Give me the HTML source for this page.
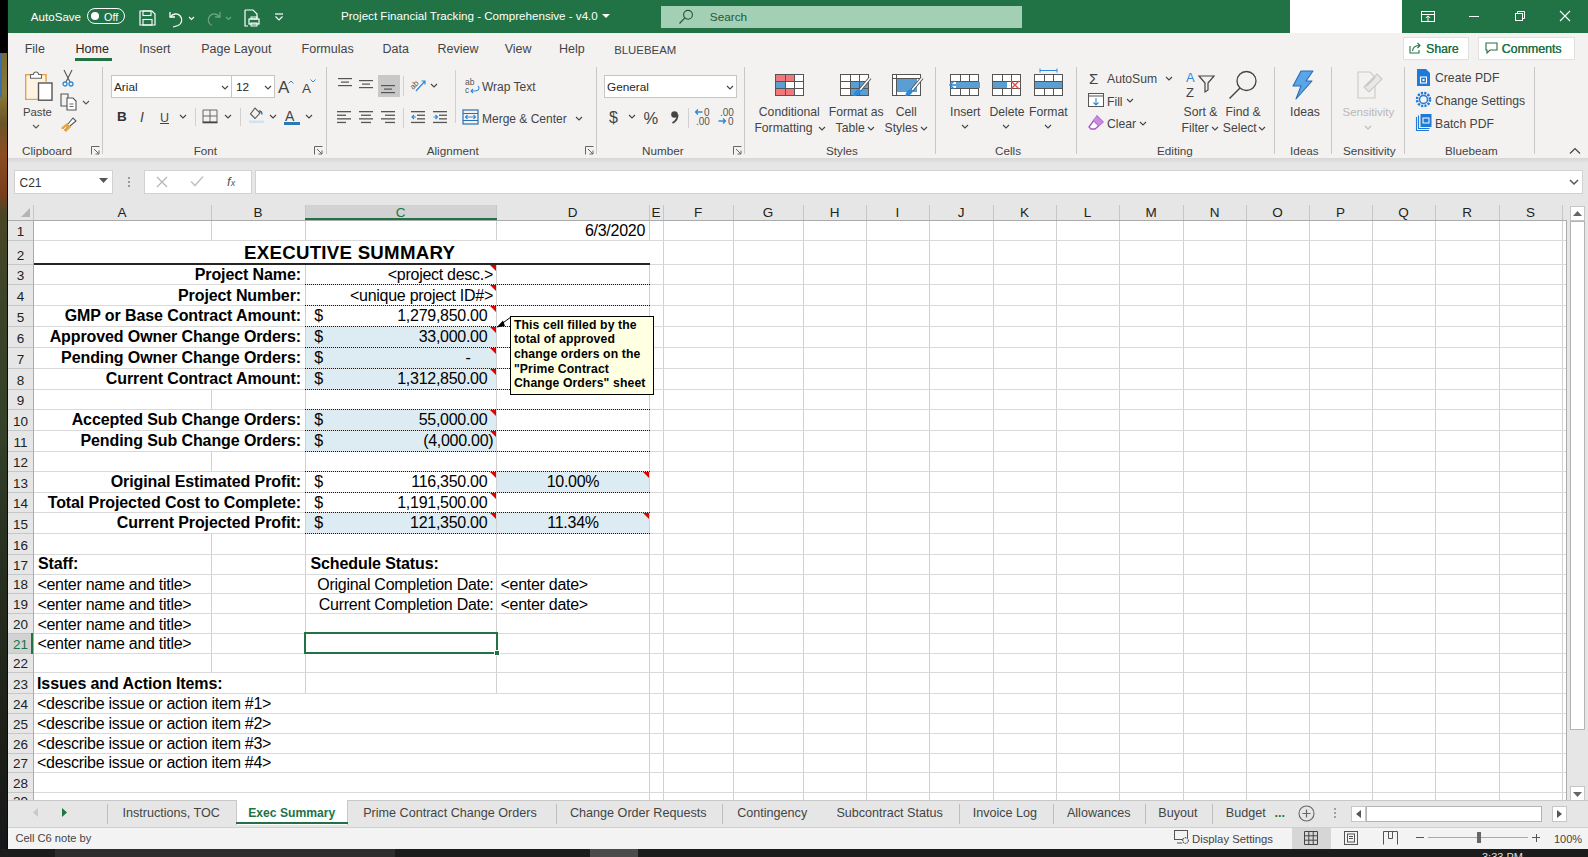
<!DOCTYPE html><html><head><meta charset="utf-8"><title>Excel</title><style>
*{margin:0;padding:0;box-sizing:border-box}
html,body{width:1588px;height:857px;overflow:hidden;background:#f3f3f3;font-family:"Liberation Sans",sans-serif}
.a{position:absolute}
.t{position:absolute;white-space:nowrap;line-height:20px}
svg{position:absolute;overflow:visible}
</style></head><body>
<div class="a" style="left:0;top:0;width:8px;height:857px;background:#000"></div>
<div class="a" style="left:0;top:53px;width:7px;height:796px;background:linear-gradient(180deg,#7a6a34 0px,#8a7a38 40px,#6a5428 70px,#8a4e22 100px,#7a3e1c 140px,#4a4626 160px,#3c4428 250px,#34402a 380px,#2a3222 480px,#22281c 600px,#1c1e18 700px,#16171a 796px)"></div>
<div class="a" style="left:0;top:53px;width:2px;height:44px;background:#3d6fa8"></div>
<div class="a" style="left:7px;top:0;width:1px;height:849px;background:#0a0a0a"></div>
<div class="a" style="left:8px;top:0;width:1580px;height:33px;background:#217346"></div>
<div class="a" style="left:1290px;top:0;width:112px;height:34px;background:#fff"></div>
<div class="a" style="left:8px;top:33px;width:1580px;height:125px;background:#f3f2f1"></div>
<div class="t" style="left:30.8px;top:6.83px;font-size:11.6px;font-weight:normal;color:#ffffff;">AutoSave</div>
<div class="a" style="left:87px;top:8px;width:38px;height:16px;border:1.3px solid #fff;border-radius:8px"></div>
<div class="a" style="left:91px;top:12px;width:8px;height:8px;border-radius:50%;background:#fff"></div>
<div class="t" style="left:104px;top:6.91px;font-size:10.8px;font-weight:normal;color:#ffffff;">Off</div>
<svg style="left:139px;top:10px" width="17" height="16" viewBox="0 0 17 16"><path d="M1 1h12l3 3v11H1z" fill="none" stroke="#fff" stroke-width="1.2"/><rect x="4" y="1" width="8" height="4.5" fill="none" stroke="#fff" stroke-width="1.1"/><rect x="4" y="9.5" width="9" height="5.5" fill="none" stroke="#fff" stroke-width="1.1"/></svg>
<svg style="left:167px;top:9px" width="30" height="18" viewBox="0 0 30 18"><path d="M3 3v5h5" fill="none" stroke="#fff" stroke-width="1.3"/><path d="M3.5 8A6 6 0 1 1 11 16.5L6 18" fill="none" stroke="#fff" stroke-width="1.3"/><path d="M22 8l2.5 2.5L27 8" fill="none" stroke="#fff" stroke-width="1.1"/></svg>
<svg style="left:204px;top:9px" width="30" height="18" viewBox="0 0 30 18" opacity="0.35"><path d="M16 3v5h-5" fill="none" stroke="#fff" stroke-width="1.3"/><path d="M15.5 8A6 6 0 1 0 8 16.5" fill="none" stroke="#fff" stroke-width="1.3"/><path d="M22 8l2.5 2.5L27 8" fill="none" stroke="#fff" stroke-width="1.1"/></svg>
<svg style="left:244px;top:9px" width="16" height="18" viewBox="0 0 16 18"><path d="M1 1h8l4 4v4M1 1v16h3" fill="none" stroke="#fff" stroke-width="1.2"/><rect x="5" y="10" width="10" height="5" fill="none" stroke="#fff" stroke-width="1.2"/><rect x="7" y="8" width="6" height="2" fill="none" stroke="#fff" stroke-width="1"/><rect x="7" y="14" width="6" height="3" fill="none" stroke="#fff" stroke-width="1"/></svg>
<svg style="left:274px;top:13px" width="10" height="8" viewBox="0 0 10 8"><path d="M1 1h8" stroke="#fff" stroke-width="1.2"/><path d="M1.5 3.5L5 7l3.5-3.5" fill="none" stroke="#fff" stroke-width="1.2"/></svg>
<div class="t" style="left:341px;top:6.32px;font-size:11.62px;font-weight:normal;color:#ffffff;">Project Financial Tracking - Comprehensive - v4.0</div>
<svg style="left:602px;top:14px" width="8" height="5"><polygon points="0,0 8,0 4,4" fill="#fff"/></svg>
<div class="a" style="left:661px;top:6px;width:361px;height:22px;background:#a3cfb4"></div>
<svg style="left:678px;top:9px" width="16" height="16" viewBox="0 0 16 16"><circle cx="10" cy="5.8" r="4.4" fill="none" stroke="#1f5a3a" stroke-width="1.1"/><path d="M6.8 8.9L1.5 14.5" stroke="#1f5a3a" stroke-width="1.2"/></svg>
<div class="t" style="left:709.8px;top:6.86px;font-size:11.8px;font-weight:normal;color:#1f5a3a;">Search</div>
<svg style="left:1420px;top:9px" width="17" height="14" viewBox="0 0 17 14"><rect x="1.5" y="2.5" width="13" height="10" fill="none" stroke="#fff" stroke-width="1"/><path d="M1.5 5.5h13" stroke="#fff"/><path d="M8 12V7M5.8 9L8 6.8 10.2 9" fill="none" stroke="#fff"/></svg>
<div class="a" style="left:1469px;top:16px;width:10px;height:1px;background:#fff"></div>
<svg style="left:1514px;top:10px" width="12" height="12" viewBox="0 0 12 12"><rect x="1.5" y="3.5" width="7" height="7" fill="none" stroke="#fff"/><path d="M3.5 3.5v-2h7v7h-2" fill="none" stroke="#fff"/></svg>
<svg style="left:1559px;top:10px" width="12" height="12" viewBox="0 0 12 12"><path d="M1 1l10 10M11 1L1 11" stroke="#fff" stroke-width="1.1"/></svg>
<div class="a" style="left:8px;top:158px;width:1580px;height:5px;background:linear-gradient(180deg,#d6d6d6,#e6e6e6)"></div>
<div class="t" style="left:24.7px;top:39.32px;font-size:12.5px;font-weight:normal;color:#444;">File</div>
<div class="t" style="left:75.6px;top:39.32px;font-size:12.5px;font-weight:normal;color:#262626;">Home</div>
<div class="t" style="left:139.3px;top:39.32px;font-size:12.5px;font-weight:normal;color:#444;">Insert</div>
<div class="t" style="left:201.2px;top:39.32px;font-size:12.5px;font-weight:normal;color:#444;">Page Layout</div>
<div class="t" style="left:301.6px;top:39.32px;font-size:12.5px;font-weight:normal;color:#444;">Formulas</div>
<div class="t" style="left:382.5px;top:39.32px;font-size:12.5px;font-weight:normal;color:#444;">Data</div>
<div class="t" style="left:437.6px;top:39.32px;font-size:12.5px;font-weight:normal;color:#444;">Review</div>
<div class="t" style="left:504.7px;top:39.32px;font-size:12.5px;font-weight:normal;color:#444;">View</div>
<div class="t" style="left:559px;top:39.32px;font-size:12.5px;font-weight:normal;color:#444;">Help</div>
<div class="t" style="left:614.2px;top:39.70px;font-size:11.4px;font-weight:normal;color:#444;">BLUEBEAM</div>
<div class="a" style="left:75px;top:58px;width:37px;height:3px;background:#217346"></div>
<div class="a" style="left:1403px;top:37px;width:66px;height:23px;background:#fff;border:1px solid #e1e1e1"></div>
<div class="a" style="left:1478px;top:37px;width:97px;height:23px;background:#fff;border:1px solid #e1e1e1"></div>
<div class="t" style="left:1426px;top:39.22px;font-size:12.2px;font-weight:normal;color:#217346;text-shadow:0.3px 0 0 #217346">Share</div>
<div class="t" style="left:1501.6px;top:39.15px;font-size:12.4px;font-weight:normal;color:#217346;text-shadow:0.3px 0 0 #217346">Comments</div>
<svg style="left:1409px;top:41px" width="13" height="13" viewBox="0 0 13 13"><path d="M1 5v7h9V9" fill="none" stroke="#217346" stroke-width="1.1"/><path d="M3.5 10C4 6 7 4.5 10.5 4.5M8.5 2l2.5 2.5L8.5 7" fill="none" stroke="#217346" stroke-width="1.1"/></svg>
<svg style="left:1485px;top:42px" width="13" height="12" viewBox="0 0 13 12"><path d="M1 1h11v7H5l-3 3V8H1z" fill="none" stroke="#217346" stroke-width="1.1"/></svg>
<div class="a" style="left:102px;top:67px;width:1px;height:87px;background:#c8c8c8"></div>
<div class="a" style="left:326px;top:67px;width:1px;height:87px;background:#c8c8c8"></div>
<div class="a" style="left:596px;top:67px;width:1px;height:87px;background:#c8c8c8"></div>
<div class="a" style="left:744px;top:67px;width:1px;height:87px;background:#c8c8c8"></div>
<div class="a" style="left:935px;top:67px;width:1px;height:87px;background:#c8c8c8"></div>
<div class="a" style="left:1076px;top:67px;width:1px;height:87px;background:#c8c8c8"></div>
<div class="a" style="left:1274px;top:67px;width:1px;height:87px;background:#c8c8c8"></div>
<div class="a" style="left:1331px;top:67px;width:1px;height:87px;background:#c8c8c8"></div>
<div class="a" style="left:1404px;top:67px;width:1px;height:87px;background:#c8c8c8"></div>
<div class="a" style="left:1534px;top:67px;width:1px;height:87px;background:#c8c8c8"></div>
<div class="t" style="left:22px;top:140.70px;font-size:11.7px;font-weight:normal;color:#444;">Clipboard</div>
<div class="t" style="left:193.7px;top:140.70px;font-size:11.7px;font-weight:normal;color:#444;">Font</div>
<div class="t" style="left:426.7px;top:140.70px;font-size:11.7px;font-weight:normal;color:#444;">Alignment</div>
<div class="t" style="left:642px;top:140.70px;font-size:11.7px;font-weight:normal;color:#444;">Number</div>
<div class="t" style="left:826px;top:140.70px;font-size:11.7px;font-weight:normal;color:#444;">Styles</div>
<div class="t" style="left:995px;top:140.70px;font-size:11.7px;font-weight:normal;color:#444;">Cells</div>
<div class="t" style="left:1157px;top:140.70px;font-size:11.7px;font-weight:normal;color:#444;">Editing</div>
<div class="t" style="left:1290px;top:140.70px;font-size:11.7px;font-weight:normal;color:#444;">Ideas</div>
<div class="t" style="left:1343px;top:140.70px;font-size:11.7px;font-weight:normal;color:#444;">Sensitivity</div>
<div class="t" style="left:1445px;top:140.70px;font-size:11.7px;font-weight:normal;color:#444;">Bluebeam</div>
<svg style="left:91px;top:146px" width="9" height="9" viewBox="0 0 9 9"><path d="M0.5 8.5V0.5h8" fill="none" stroke="#666" stroke-width="1"/><path d="M3 3l5 5M4.5 8h3.5V4.5" fill="none" stroke="#666" stroke-width="1"/></svg>
<svg style="left:314px;top:146px" width="9" height="9" viewBox="0 0 9 9"><path d="M0.5 8.5V0.5h8" fill="none" stroke="#666" stroke-width="1"/><path d="M3 3l5 5M4.5 8h3.5V4.5" fill="none" stroke="#666" stroke-width="1"/></svg>
<svg style="left:585px;top:146px" width="9" height="9" viewBox="0 0 9 9"><path d="M0.5 8.5V0.5h8" fill="none" stroke="#666" stroke-width="1"/><path d="M3 3l5 5M4.5 8h3.5V4.5" fill="none" stroke="#666" stroke-width="1"/></svg>
<svg style="left:733px;top:146px" width="9" height="9" viewBox="0 0 9 9"><path d="M0.5 8.5V0.5h8" fill="none" stroke="#666" stroke-width="1"/><path d="M3 3l5 5M4.5 8h3.5V4.5" fill="none" stroke="#666" stroke-width="1"/></svg>
<svg style="left:1569px;top:147px" width="12" height="8" viewBox="0 0 12 8"><path d="M1 6.5L6 1.5l5 5" fill="none" stroke="#444" stroke-width="1.2"/></svg>
<svg style="left:23px;top:69px" width="32" height="33" viewBox="0 0 32 33"><path d="M2.8 5.8h5M18.5 5.8h4.5v7" fill="none" stroke="#e5a243" stroke-width="1.6"/><path d="M2.8 5v25.2h12" fill="none" stroke="#e5a243" stroke-width="1.6"/><rect x="3.6" y="6.6" width="18.6" height="23" fill="#fdf3e3"/><path d="M7.5 9.2V5.5h3a2.5 2.5 0 0 1 5 0h3v3.7z" fill="#fff" stroke="#666" stroke-width="1.1"/><rect x="15.5" y="14" width="13.5" height="17.2" fill="#fff" stroke="#555" stroke-width="1.4"/></svg>
<div class="t" style="left:23px;top:102.33px;font-size:11.3px;font-weight:normal;color:#444444;">Paste</div>
<svg style="left:32px;top:124px" width="8" height="5" viewBox="0 0 8 5"><path d="M1 1l3 3 3-3" fill="none" stroke="#555" stroke-width="1.1"/></svg>
<svg style="left:61px;top:69px" width="14" height="18" viewBox="0 0 14 18"><path d="M3 1l6 12M11 1L5 13" stroke="#555" stroke-width="1.1"/><circle cx="4" cy="15" r="2" fill="none" stroke="#2e8ad8" stroke-width="1.3"/><circle cx="10" cy="15" r="2" fill="none" stroke="#2e8ad8" stroke-width="1.3"/></svg>
<svg style="left:60px;top:93px" width="18" height="18" viewBox="0 0 18 18"><path d="M1 1h7v12H1z" fill="none" stroke="#555" stroke-width="1.1"/><path d="M7 5h6l3 3v9H7z" fill="#fff" stroke="#555" stroke-width="1.1"/><path d="M9.5 11h4M9.5 13.5h4" stroke="#555" stroke-width="0.9"/></svg>
<svg style="left:82px;top:100px" width="8" height="5" viewBox="0 0 8 5"><path d="M1 1l3 3 3-3" fill="none" stroke="#555" stroke-width="1.1"/></svg>
<svg style="left:59px;top:116px" width="18" height="17" viewBox="0 0 18 17"><path d="M2 12l6-5 4 4-5 5z" fill="#e8a33d"/><path d="M4 14l3-3" stroke="#fff" stroke-width="1"/><path d="M9 8l5-6 3 3-6 5" fill="#fff" stroke="#555" stroke-width="1.1"/></svg>
<div class="a" style="left:111px;top:75px;width:164px;height:23px;background:#fff;border:1px solid #c6c6c6"></div>
<div class="a" style="left:231px;top:76px;width:1px;height:21px;background:#c6c6c6"></div>
<div class="t" style="left:114px;top:76.66px;font-size:11.8px;font-weight:normal;color:#262626;">Arial</div>
<div class="t" style="left:236px;top:76.66px;font-size:11.8px;font-weight:normal;color:#262626;">12</div>
<svg style="left:221px;top:85px" width="8" height="5" viewBox="0 0 8 5"><path d="M1 1l3 3 3-3" fill="none" stroke="#444" stroke-width="1.1"/></svg>
<svg style="left:264px;top:85px" width="8" height="5" viewBox="0 0 8 5"><path d="M1 1l3 3 3-3" fill="none" stroke="#444" stroke-width="1.1"/></svg>
<svg style="left:179px;top:114px" width="8" height="5" viewBox="0 0 8 5"><path d="M1 1l3 3 3-3" fill="none" stroke="#444" stroke-width="1.1"/></svg>
<svg style="left:224px;top:114px" width="8" height="5" viewBox="0 0 8 5"><path d="M1 1l3 3 3-3" fill="none" stroke="#444" stroke-width="1.1"/></svg>
<svg style="left:269px;top:114px" width="8" height="5" viewBox="0 0 8 5"><path d="M1 1l3 3 3-3" fill="none" stroke="#444" stroke-width="1.1"/></svg>
<svg style="left:305px;top:114px" width="8" height="5" viewBox="0 0 8 5"><path d="M1 1l3 3 3-3" fill="none" stroke="#444" stroke-width="1.1"/></svg>
<svg style="left:628px;top:114px" width="8" height="5" viewBox="0 0 8 5"><path d="M1 1l3 3 3-3" fill="none" stroke="#444" stroke-width="1.1"/></svg>
<svg style="left:726px;top:85px" width="8" height="5" viewBox="0 0 8 5"><path d="M1 1l3 3 3-3" fill="none" stroke="#444" stroke-width="1.1"/></svg>
<svg style="left:575px;top:116px" width="8" height="5" viewBox="0 0 8 5"><path d="M1 1l3 3 3-3" fill="none" stroke="#444" stroke-width="1.1"/></svg>
<svg style="left:1165px;top:76px" width="8" height="5" viewBox="0 0 8 5"><path d="M1 1l3 3 3-3" fill="none" stroke="#444" stroke-width="1.1"/></svg>
<svg style="left:1126px;top:98px" width="8" height="5" viewBox="0 0 8 5"><path d="M1 1l3 3 3-3" fill="none" stroke="#444" stroke-width="1.1"/></svg>
<svg style="left:1139px;top:121px" width="8" height="5" viewBox="0 0 8 5"><path d="M1 1l3 3 3-3" fill="none" stroke="#444" stroke-width="1.1"/></svg>
<div class="t" style="left:278px;top:77.56px;font-size:17px;font-weight:normal;color:#444;">A</div>
<svg style="left:288px;top:80px" width="6" height="4"><path d="M0.5 3.5L3 1l2.5 2.5" fill="none" stroke="#2e8ad8" stroke-width="1"/></svg>
<div class="t" style="left:302px;top:78.77px;font-size:13.5px;font-weight:normal;color:#444;">A</div>
<svg style="left:310px;top:79px" width="6" height="4"><path d="M0.5 0.5L3 3l2.5-2.5" fill="none" stroke="#2e8ad8" stroke-width="1"/></svg>
<div class="t" style="left:117px;top:107.37px;font-size:13.5px;font-weight:bold;color:#333;">B</div>
<div class="t" style="left:140px;top:107.20px;font-size:14px;font-weight:normal;color:#444;font-style:italic;font-family:"Liberation Serif",serif">I</div>
<div class="t" style="left:160px;top:107.72px;font-size:12.5px;font-weight:normal;color:#444;">U</div>
<div class="a" style="left:160px;top:123px;width:9px;height:1px;background:#444"></div>
<div class="a" style="left:195px;top:108px;width:1px;height:18px;background:#d0d0d0"></div>
<div class="a" style="left:240px;top:108px;width:1px;height:18px;background:#d0d0d0"></div>
<svg style="left:202px;top:109px" width="16" height="15" viewBox="0 0 16 15"><path d="M1 1h14v12H1z M8 1v12 M1 7h14" fill="none" stroke="#666" stroke-width="1"/><path d="M0.5 13.5h15" stroke="#444" stroke-width="1.6"/></svg>
<svg style="left:249px;top:106px" width="15" height="17" viewBox="0 0 15 17"><path d="M6 2L1.5 8l4.5 4.5L11 7z" fill="none" stroke="#555" stroke-width="1.1"/><path d="M10 5c2 0 3 1.5 3 3.5" fill="none" stroke="#2e6fb0" stroke-width="1.3"/><rect x="0" y="14.5" width="15" height="2.5" fill="#cfe3f3"/></svg>
<div class="t" style="left:285px;top:106.10px;font-size:14px;font-weight:normal;color:#444;">A</div>
<div class="a" style="left:284px;top:122px;width:16px;height:3px;background:#2779b8"></div>
<div class="a" style="left:378px;top:75px;width:22px;height:22px;background:#c8c8c8"></div>
<svg style="left:338px;top:78px" width="16" height="12"><rect x="0" y="0" width="14" height="1.2" fill="#555"/><rect x="3" y="3.5" width="8" height="1.2" fill="#555"/><rect x="0" y="7" width="14" height="1.2" fill="#555"/></svg>
<svg style="left:359px;top:80px" width="16" height="12"><rect x="0" y="0" width="14" height="1.2" fill="#555"/><rect x="3" y="3.5" width="8" height="1.2" fill="#555"/><rect x="0" y="7" width="14" height="1.2" fill="#555"/></svg>
<svg style="left:381px;top:82px" width="16" height="12"><rect x="0" y="3" width="14" height="1.2" fill="#555"/><rect x="3" y="6.5" width="8" height="1.2" fill="#555"/><rect x="0" y="10" width="14" height="1.2" fill="#555"/></svg>
<div class="a" style="left:403px;top:76px;width:1px;height:20px;background:#d0d0d0"></div>
<svg style="left:410px;top:77px" width="28" height="16" viewBox="0 0 28 16"><text x="0" y="10" font-size="8" fill="#555" transform="rotate(-45 5 8)" font-family="Liberation Sans">ab</text><path d="M6 14L15 4M11.5 4H15v3.5" fill="none" stroke="#2e8ad8" stroke-width="1.2"/><path d="M21 7l3 3 3-3" fill="none" stroke="#444" stroke-width="1.1"/></svg>
<div class="a" style="left:455px;top:70px;width:1px;height:53px;background:#d0d0d0"></div>
<svg style="left:465px;top:77px" width="16" height="17" viewBox="0 0 16 17"><text x="0" y="8" font-size="8.5" fill="#555" font-family="Liberation Sans">ab</text><text x="0" y="16" font-size="8.5" fill="#555" font-family="Liberation Sans">c</text><path d="M13 9c2 2 1 5-3 5H6M8 12l-2 2 2 2" fill="none" stroke="#2e8ad8" stroke-width="1.1"/></svg>
<div class="t" style="left:482px;top:77.49px;font-size:12px;font-weight:normal;color:#444444;">Wrap Text</div>
<svg style="left:337px;top:111px" width="16" height="14"><rect x="0" y="0.0" width="14" height="1.3" fill="#555"/><rect x="0" y="3.6" width="9" height="1.3" fill="#555"/><rect x="0" y="7.2" width="14" height="1.3" fill="#555"/><rect x="0" y="10.8" width="9" height="1.3" fill="#555"/></svg>
<svg style="left:359px;top:111px" width="16" height="14"><rect x="0.0" y="0.0" width="14" height="1.3" fill="#555"/><rect x="2.0" y="3.6" width="10" height="1.3" fill="#555"/><rect x="0.0" y="7.2" width="14" height="1.3" fill="#555"/><rect x="2.0" y="10.8" width="10" height="1.3" fill="#555"/></svg>
<svg style="left:381px;top:111px" width="16" height="14"><rect x="0" y="0.0" width="14" height="1.3" fill="#555"/><rect x="4" y="3.6" width="10" height="1.3" fill="#555"/><rect x="0" y="7.2" width="14" height="1.3" fill="#555"/><rect x="4" y="10.8" width="10" height="1.3" fill="#555"/></svg>
<div class="a" style="left:403px;top:108px;width:1px;height:20px;background:#d0d0d0"></div>
<svg style="left:411px;top:111px" width="16" height="14"><rect x="0" y="0" width="14" height="1.3" fill="#555"/><rect x="6" y="3.6" width="8" height="1.3" fill="#555"/><rect x="6" y="7.2" width="8" height="1.3" fill="#555"/><rect x="0" y="10.8" width="14" height="1.3" fill="#555"/><path d="M5 6h-4M3 4l-2 2 2 2" fill="none" stroke="#2e8ad8" stroke-width="1.2"/></svg>
<svg style="left:433px;top:111px" width="16" height="14"><rect x="0" y="0" width="14" height="1.3" fill="#555"/><rect x="6" y="3.6" width="8" height="1.3" fill="#555"/><rect x="6" y="7.2" width="8" height="1.3" fill="#555"/><rect x="0" y="10.8" width="14" height="1.3" fill="#555"/><path d="M0.5 6h4M2.5 4l2 2-2 2" fill="none" stroke="#2e8ad8" stroke-width="1.2"/></svg>
<svg style="left:462px;top:109px" width="17" height="16" viewBox="0 0 17 16"><rect x="1" y="1" width="15" height="14" fill="none" stroke="#2e6fb0" stroke-width="1.2"/><path d="M1 4.5h15M1 11.5h15" stroke="#2e6fb0" stroke-width="1"/><path d="M3.5 8h10M5.5 6l-2 2 2 2M11.5 6l2 2-2 2" fill="none" stroke="#2e8ad8" stroke-width="1.1"/></svg>
<div class="t" style="left:482px;top:108.79px;font-size:12px;font-weight:normal;color:#444444;">Merge &amp; Center</div>
<div class="a" style="left:604px;top:75px;width:133px;height:23px;background:#fff;border:1px solid #c6c6c6"></div>
<div class="t" style="left:607px;top:76.86px;font-size:11.8px;font-weight:normal;color:#262626;">General</div>
<div class="t" style="left:609px;top:108.41px;font-size:16px;font-weight:normal;color:#444;">$</div>
<div class="t" style="left:643.5px;top:108.23px;font-size:16.5px;font-weight:normal;color:#444;">%</div>
<div class="a" style="left:688px;top:108px;width:1px;height:20px;background:#d0d0d0"></div>
<svg style="left:694px;top:107px" width="20" height="19" viewBox="0 0 20 19"><text x="10" y="8.5" font-size="10" fill="#555" font-family="Liberation Sans">0</text><text x="2" y="18" font-size="10" fill="#555" font-family="Liberation Sans">.00</text><path d="M1.5 5h7M4 2.5L1.5 5 4 7.5" fill="none" stroke="#2e8ad8" stroke-width="1.3"/></svg>
<svg style="left:717px;top:107px" width="20" height="19" viewBox="0 0 20 19"><text x="3" y="8.5" font-size="10" fill="#555" font-family="Liberation Sans">.00</text><text x="11" y="18" font-size="10" fill="#555" font-family="Liberation Sans">0</text><path d="M1.5 14h7M6 11.5L8.5 14 6 16.5" fill="none" stroke="#2e8ad8" stroke-width="1.3"/></svg>
<svg style="left:726px;top:85px" width="8" height="5" viewBox="0 0 8 5"><path d="M1 1l3 3 3-3" fill="none" stroke="#444" stroke-width="1.1"/></svg>
<svg style="left:670px;top:110px" width="9" height="14" viewBox="0 0 9 14"><circle cx="4.5" cy="4.5" r="3.3" fill="#444"/><path d="M7.6 4.5C7.8 8 6 11 2.5 13" fill="none" stroke="#444" stroke-width="1.8"/></svg>
<svg style="left:775px;top:74px" width="30" height="23"><rect x="0.5" y="0.5" width="28" height="21" fill="#fff" stroke="#555"/><rect x="1" y="1" width="19" height="6.5" fill="#f0787c"/><rect x="1" y="14.5" width="19" height="6.5" fill="#f0787c"/><rect x="1" y="7.5" width="10" height="7" fill="#5a9fd4"/><path d="M10.5 0.5V21.5M19.5 0.5V21.5M0.5 7.5H28.5M0.5 14.5H28.5" stroke="#555"/></svg>
<div class="t" style="left:758.8px;top:101.72px;font-size:12.2px;font-weight:normal;color:#444444;">Conditional</div>
<div class="t" style="left:754.4px;top:117.52px;font-size:12.2px;font-weight:normal;color:#444444;">Formatting</div>
<svg style="left:818px;top:126px" width="8" height="5" viewBox="0 0 8 5"><path d="M1 1l3 3 3-3" fill="none" stroke="#444" stroke-width="1.1"/></svg>
<svg style="left:840px;top:74px" width="32" height="24"><rect x="0.5" y="0.5" width="28" height="21" fill="#fff" stroke="#555"/><rect x="10" y="7" width="18" height="14" fill="#5a9fd4"/><path d="M10.5 0.5V21.5M19.5 0.5V21.5M0.5 7.5H28.5M0.5 14.5H28.5" stroke="#555"/><path d="M30 4L20 16" stroke="#555" stroke-width="3.5"/><path d="M30 4L20 16" stroke="#fff" stroke-width="1.6"/><path d="M14 19c2-4 6-5 7-2-1 3-4 5-8 5z" fill="#2e8ad8"/></svg>
<div class="t" style="left:828.7px;top:101.72px;font-size:12.2px;font-weight:normal;color:#444444;">Format as</div>
<div class="t" style="left:835.6px;top:117.52px;font-size:12.2px;font-weight:normal;color:#444444;">Table</div>
<svg style="left:867px;top:126px" width="8" height="5" viewBox="0 0 8 5"><path d="M1 1l3 3 3-3" fill="none" stroke="#444" stroke-width="1.1"/></svg>
<svg style="left:892px;top:74px" width="32" height="24"><rect x="0.5" y="0.5" width="28" height="21" fill="#fff" stroke="#555"/><rect x="4" y="4" width="21" height="14" fill="#5a9fd4"/><path d="M0.5 4.5H28.5M4.5 0.5V21.5" stroke="#555"/><path d="M30 4L20 16" stroke="#555" stroke-width="3.5"/><path d="M30 4L20 16" stroke="#fff" stroke-width="1.6"/><path d="M14 19c2-4 6-5 7-2-1 3-4 5-8 5z" fill="#2e8ad8"/></svg>
<div class="t" style="left:895.7px;top:101.72px;font-size:12.2px;font-weight:normal;color:#444444;">Cell</div>
<div class="t" style="left:884.6px;top:117.52px;font-size:12.2px;font-weight:normal;color:#444444;">Styles</div>
<svg style="left:920px;top:126px" width="8" height="5" viewBox="0 0 8 5"><path d="M1 1l3 3 3-3" fill="none" stroke="#444" stroke-width="1.1"/></svg>
<svg style="left:950px;top:74px" width="32" height="23"><rect x="0.5" y="0.5" width="28" height="21" fill="#fff" stroke="#555"/><path d="M10.5 0.5V21.5M19.5 0.5V21.5M0.5 7.5H28.5M0.5 14.5H28.5" stroke="#555"/><rect x="6" y="8" width="24" height="6" fill="#5a9fd4"/><path d="M0 11h8M4 7l-4 4 4 4" fill="none" stroke="#2e8ad8" stroke-width="1.6"/><path d="M3 11h26" stroke="#5a9fd4" stroke-width="2"/></svg>
<div class="t" style="left:950px;top:101.72px;font-size:12.2px;font-weight:normal;color:#444444;">Insert</div>
<svg style="left:961px;top:124px" width="8" height="5" viewBox="0 0 8 5"><path d="M1 1l3 3 3-3" fill="none" stroke="#444" stroke-width="1.1"/></svg>
<svg style="left:992px;top:74px" width="32" height="23"><rect x="0.5" y="0.5" width="28" height="21" fill="#fff" stroke="#555"/><path d="M10.5 0.5V21.5M19.5 0.5V21.5M0.5 7.5H28.5M0.5 14.5H28.5" stroke="#555"/><rect x="1" y="8" width="14" height="6" fill="#5a9fd4"/><path d="M19 7l8 8M27 7l-8 8" stroke="#e84a4a" stroke-width="1.3"/></svg>
<div class="t" style="left:989.4px;top:101.72px;font-size:12.2px;font-weight:normal;color:#444444;">Delete</div>
<svg style="left:1002px;top:124px" width="8" height="5" viewBox="0 0 8 5"><path d="M1 1l3 3 3-3" fill="none" stroke="#444" stroke-width="1.1"/></svg>
<svg style="left:1034px;top:74px" width="32" height="23"><rect x="0.5" y="0.5" width="28" height="21" fill="#fff" stroke="#555"/><path d="M10.5 0.5V21.5M19.5 0.5V21.5M0.5 7.5H28.5M0.5 14.5H28.5" stroke="#555"/><rect x="1" y="8" width="27" height="6" fill="#5a9fd4"/><path d="M10.5 8V14M19.5 8V14" stroke="#5a9fd4"/></svg>
<svg style="left:1040px;top:68px" width="18" height="5"><path d="M0 0.5V4.5M17 0.5V4.5M0 2.5H17" stroke="#2e8ad8" stroke-width="1"/></svg>
<div class="t" style="left:1029px;top:101.72px;font-size:12.2px;font-weight:normal;color:#444444;">Format</div>
<svg style="left:1044px;top:124px" width="8" height="5" viewBox="0 0 8 5"><path d="M1 1l3 3 3-3" fill="none" stroke="#444" stroke-width="1.1"/></svg>
<div class="t" style="left:1089px;top:68.75px;font-size:15px;font-weight:normal;color:#444;">&#931;</div>
<div class="t" style="left:1107px;top:68.72px;font-size:12.2px;font-weight:normal;color:#444444;">AutoSum</div>
<svg style="left:1088px;top:93px" width="17" height="15" viewBox="0 0 17 15"><rect x="0.5" y="0.5" width="15" height="13" fill="#fff" stroke="#555"/><path d="M0.5 3H15.5" stroke="#555"/><path d="M8 5v7M5.5 9.5L8 12l2.5-2.5" fill="none" stroke="#2e8ad8" stroke-width="1.1"/></svg>
<div class="t" style="left:1107px;top:91.52px;font-size:12.2px;font-weight:normal;color:#444444;">Fill</div>
<svg style="left:1088px;top:115px" width="16" height="15" viewBox="0 0 16 15"><path d="M9 1l6 6-8 7H3L1 12z" fill="#fff" stroke="#a555c8" stroke-width="1.3"/><path d="M5 5l6 6" stroke="#a555c8" stroke-width="1.3"/><path d="M9 1l6 6-4 4-6-6z" fill="#c98ae0"/></svg>
<div class="t" style="left:1107px;top:114.22px;font-size:12.2px;font-weight:normal;color:#444444;">Clear</div>
<svg style="left:1185px;top:70px" width="32" height="29" viewBox="0 0 32 29"><text x="1" y="12" font-size="13" fill="#2e8ad8" font-family="Liberation Sans">A</text><text x="1" y="27" font-size="13" fill="#444" font-family="Liberation Sans">Z</text><path d="M14 6h15l-6 7v7l-3 2v-9z" fill="none" stroke="#444" stroke-width="1.2"/></svg>
<div class="t" style="left:1183.5px;top:101.72px;font-size:12.2px;font-weight:normal;color:#444444;">Sort &amp;</div>
<div class="t" style="left:1181.6px;top:117.72px;font-size:12.2px;font-weight:normal;color:#444444;">Filter</div>
<svg style="left:1211px;top:126px" width="8" height="5" viewBox="0 0 8 5"><path d="M1 1l3 3 3-3" fill="none" stroke="#444" stroke-width="1.1"/></svg>
<svg style="left:1228px;top:70px" width="30" height="30" viewBox="0 0 30 30"><circle cx="18.5" cy="11" r="9.5" fill="none" stroke="#444" stroke-width="1.3"/><path d="M12 18L1.5 28.5" stroke="#444" stroke-width="1.4"/></svg>
<div class="t" style="left:1225.5px;top:101.72px;font-size:12.2px;font-weight:normal;color:#444444;">Find &amp;</div>
<div class="t" style="left:1222.8px;top:117.72px;font-size:12.2px;font-weight:normal;color:#444444;">Select</div>
<svg style="left:1258px;top:126px" width="8" height="5" viewBox="0 0 8 5"><path d="M1 1l3 3 3-3" fill="none" stroke="#444" stroke-width="1.1"/></svg>
<svg style="left:1291px;top:70px" width="24" height="30" viewBox="0 0 24 30"><path d="M10 1h12l-7 10h6L5 29l5-13H2z" fill="#5aa5e6" stroke="#2b6cb8" stroke-width="1.1" stroke-linejoin="round"/></svg>
<div class="t" style="left:1290px;top:101.72px;font-size:12.2px;font-weight:normal;color:#444444;">Ideas</div>
<svg style="left:1357px;top:69px" width="28" height="30" viewBox="0 0 28 30" opacity="0.45"><path d="M1 3h12l5 5v21H1z" fill="#f3f3f3" stroke="#999" stroke-width="1.1"/><path d="M7 18L20 5l5 5-13 13z" fill="#ddd" stroke="#999" stroke-width="1.1"/><path d="M9 17l9-9" stroke="#999" stroke-width="2"/></svg>
<div class="t" style="left:1342.5px;top:101.97px;font-size:11.5px;font-weight:normal;color:#b8b8b8;">Sensitivity</div>
<svg style="left:1364px;top:125px" width="8" height="5" viewBox="0 0 8 5"><path d="M1 1l3 3 3-3" fill="none" stroke="#bbb" stroke-width="1.1"/></svg>
<svg style="left:1417px;top:69px" width="13" height="17" viewBox="0 0 13 17"><path d="M0 0h9l4 4v13H0z" fill="#1e7ad6"/><rect x="3.5" y="8" width="6" height="6" fill="none" stroke="#fff" stroke-width="1.1"/><rect x="5.5" y="10" width="2" height="2" fill="#fff"/></svg>
<div class="t" style="left:1435px;top:68.22px;font-size:12.2px;font-weight:normal;color:#444444;">Create PDF</div>
<svg style="left:1415px;top:91px" width="17" height="17" viewBox="0 0 17 17"><circle cx="8.5" cy="8.5" r="4" fill="none" stroke="#1e7ad6" stroke-width="1.5"/><circle cx="8.5" cy="8.5" r="6.5" fill="none" stroke="#1e7ad6" stroke-width="2.5" stroke-dasharray="2.2 1.2"/></svg>
<div class="t" style="left:1435px;top:91.22px;font-size:12.2px;font-weight:normal;color:#444444;">Change Settings</div>
<svg style="left:1416px;top:114px" width="16" height="17" viewBox="0 0 16 17"><path d="M0.5 3v13.5H13" fill="none" stroke="#1e7ad6" stroke-width="1.1"/><path d="M2.5 1.5v13h11" fill="none" stroke="#1e7ad6" stroke-width="1.1"/><rect x="4.5" y="0" width="11" height="13" fill="#1e7ad6"/><rect x="7" y="4" width="6" height="5" fill="none" stroke="#fff" stroke-width="1"/></svg>
<div class="t" style="left:1435px;top:113.72px;font-size:12.2px;font-weight:normal;color:#444444;">Batch PDF</div>
<div class="a" style="left:8px;top:163px;width:1580px;height:41px;background:#e6e6e6"></div>
<div class="a" style="left:14px;top:170px;width:99px;height:24px;background:#fff;border:1px solid #d2d2d2"></div>
<div class="t" style="left:19.5px;top:172.79px;font-size:12px;font-weight:normal;color:#333;">C21</div>
<svg style="left:99px;top:178px" width="9" height="6"><polygon points="0,0 9,0 4.5,5" fill="#555"/></svg>
<div class="a" style="left:128px;top:177px;width:1.5px;height:2px;background:#9a9a9a"></div>
<div class="a" style="left:128px;top:181px;width:1.5px;height:2px;background:#9a9a9a"></div>
<div class="a" style="left:128px;top:185px;width:1.5px;height:2px;background:#9a9a9a"></div>
<div class="a" style="left:144px;top:170px;width:108px;height:24px;background:#fff;border:1px solid #d2d2d2"></div>
<svg style="left:156px;top:176px" width="12" height="12"><path d="M1 1l10 10M11 1L1 11" stroke="#b4b4b4" stroke-width="1.2"/></svg>
<svg style="left:190px;top:175px" width="14" height="12"><path d="M1 6.5l4 4L13 1.5" fill="none" stroke="#c4c4c4" stroke-width="1.6"/></svg>
<div class="t" style="left:227px;top:171.95px;font-size:13px;font-weight:normal;color:#555;font-family:"Liberation Serif",serif"><i>f</i><span style="font-size:9px"><i>x</i></span></div>
<div class="a" style="left:255px;top:170px;width:1328px;height:24px;background:#fff;border:1px solid #d2d2d2"></div>
<svg style="left:1569px;top:179px" width="10" height="6"><path d="M1 1l4 4 4-4" fill="none" stroke="#555" stroke-width="1.5"/></svg>
<div class="a" style="left:8px;top:204px;width:1580px;height:596px;background:#e6e6e6"></div>
<div class="a" style="left:33px;top:220px;width:1533px;height:580px;background:#fff"></div>
<div class="a" style="left:305px;top:326px;width:191px;height:21px;background:#dcecf2"></div>
<div class="a" style="left:305px;top:347px;width:191px;height:21px;background:#dcecf2"></div>
<div class="a" style="left:305px;top:368px;width:191px;height:21px;background:#dcecf2"></div>
<div class="a" style="left:305px;top:409px;width:191px;height:21px;background:#dcecf2"></div>
<div class="a" style="left:305px;top:430px;width:191px;height:21px;background:#dcecf2"></div>
<div class="a" style="left:305px;top:512px;width:191px;height:21px;background:#dcecf2"></div>
<div class="a" style="left:496px;top:471px;width:153px;height:21px;background:#dcecf2"></div>
<div class="a" style="left:496px;top:512px;width:153px;height:21px;background:#dcecf2"></div>
<svg style="left:0;top:0" width="1588" height="857" shape-rendering="crispEdges"><rect x="211" y="220" width="1" height="20" fill="#d0d0d0"/><rect x="305" y="220" width="1" height="20" fill="#d0d0d0"/><rect x="496" y="220" width="1" height="20" fill="#d0d0d0"/><rect x="649" y="220" width="1" height="20" fill="#d0d0d0"/><rect x="663" y="220" width="1" height="20" fill="#d0d0d0"/><rect x="733" y="220" width="1" height="20" fill="#d0d0d0"/><rect x="803" y="220" width="1" height="20" fill="#d0d0d0"/><rect x="866" y="220" width="1" height="20" fill="#d0d0d0"/><rect x="929" y="220" width="1" height="20" fill="#d0d0d0"/><rect x="993" y="220" width="1" height="20" fill="#d0d0d0"/><rect x="1056" y="220" width="1" height="20" fill="#d0d0d0"/><rect x="1119" y="220" width="1" height="20" fill="#d0d0d0"/><rect x="1183" y="220" width="1" height="20" fill="#d0d0d0"/><rect x="1246" y="220" width="1" height="20" fill="#d0d0d0"/><rect x="1309" y="220" width="1" height="20" fill="#d0d0d0"/><rect x="1372" y="220" width="1" height="20" fill="#d0d0d0"/><rect x="1435" y="220" width="1" height="20" fill="#d0d0d0"/><rect x="1499" y="220" width="1" height="20" fill="#d0d0d0"/><rect x="1562" y="220" width="1" height="20" fill="#d0d0d0"/><rect x="663" y="240" width="1" height="24" fill="#d0d0d0"/><rect x="733" y="240" width="1" height="24" fill="#d0d0d0"/><rect x="803" y="240" width="1" height="24" fill="#d0d0d0"/><rect x="866" y="240" width="1" height="24" fill="#d0d0d0"/><rect x="929" y="240" width="1" height="24" fill="#d0d0d0"/><rect x="993" y="240" width="1" height="24" fill="#d0d0d0"/><rect x="1056" y="240" width="1" height="24" fill="#d0d0d0"/><rect x="1119" y="240" width="1" height="24" fill="#d0d0d0"/><rect x="1183" y="240" width="1" height="24" fill="#d0d0d0"/><rect x="1246" y="240" width="1" height="24" fill="#d0d0d0"/><rect x="1309" y="240" width="1" height="24" fill="#d0d0d0"/><rect x="1372" y="240" width="1" height="24" fill="#d0d0d0"/><rect x="1435" y="240" width="1" height="24" fill="#d0d0d0"/><rect x="1499" y="240" width="1" height="24" fill="#d0d0d0"/><rect x="1562" y="240" width="1" height="24" fill="#d0d0d0"/><rect x="305" y="264" width="1" height="20" fill="#d0d0d0"/><rect x="496" y="264" width="1" height="20" fill="#d0d0d0"/><rect x="649" y="264" width="1" height="20" fill="#d0d0d0"/><rect x="663" y="264" width="1" height="20" fill="#d0d0d0"/><rect x="733" y="264" width="1" height="20" fill="#d0d0d0"/><rect x="803" y="264" width="1" height="20" fill="#d0d0d0"/><rect x="866" y="264" width="1" height="20" fill="#d0d0d0"/><rect x="929" y="264" width="1" height="20" fill="#d0d0d0"/><rect x="993" y="264" width="1" height="20" fill="#d0d0d0"/><rect x="1056" y="264" width="1" height="20" fill="#d0d0d0"/><rect x="1119" y="264" width="1" height="20" fill="#d0d0d0"/><rect x="1183" y="264" width="1" height="20" fill="#d0d0d0"/><rect x="1246" y="264" width="1" height="20" fill="#d0d0d0"/><rect x="1309" y="264" width="1" height="20" fill="#d0d0d0"/><rect x="1372" y="264" width="1" height="20" fill="#d0d0d0"/><rect x="1435" y="264" width="1" height="20" fill="#d0d0d0"/><rect x="1499" y="264" width="1" height="20" fill="#d0d0d0"/><rect x="1562" y="264" width="1" height="20" fill="#d0d0d0"/><rect x="305" y="284" width="1" height="21" fill="#d0d0d0"/><rect x="496" y="284" width="1" height="21" fill="#d0d0d0"/><rect x="649" y="284" width="1" height="21" fill="#d0d0d0"/><rect x="663" y="284" width="1" height="21" fill="#d0d0d0"/><rect x="733" y="284" width="1" height="21" fill="#d0d0d0"/><rect x="803" y="284" width="1" height="21" fill="#d0d0d0"/><rect x="866" y="284" width="1" height="21" fill="#d0d0d0"/><rect x="929" y="284" width="1" height="21" fill="#d0d0d0"/><rect x="993" y="284" width="1" height="21" fill="#d0d0d0"/><rect x="1056" y="284" width="1" height="21" fill="#d0d0d0"/><rect x="1119" y="284" width="1" height="21" fill="#d0d0d0"/><rect x="1183" y="284" width="1" height="21" fill="#d0d0d0"/><rect x="1246" y="284" width="1" height="21" fill="#d0d0d0"/><rect x="1309" y="284" width="1" height="21" fill="#d0d0d0"/><rect x="1372" y="284" width="1" height="21" fill="#d0d0d0"/><rect x="1435" y="284" width="1" height="21" fill="#d0d0d0"/><rect x="1499" y="284" width="1" height="21" fill="#d0d0d0"/><rect x="1562" y="284" width="1" height="21" fill="#d0d0d0"/><rect x="305" y="305" width="1" height="21" fill="#d0d0d0"/><rect x="496" y="305" width="1" height="21" fill="#d0d0d0"/><rect x="649" y="305" width="1" height="21" fill="#d0d0d0"/><rect x="663" y="305" width="1" height="21" fill="#d0d0d0"/><rect x="733" y="305" width="1" height="21" fill="#d0d0d0"/><rect x="803" y="305" width="1" height="21" fill="#d0d0d0"/><rect x="866" y="305" width="1" height="21" fill="#d0d0d0"/><rect x="929" y="305" width="1" height="21" fill="#d0d0d0"/><rect x="993" y="305" width="1" height="21" fill="#d0d0d0"/><rect x="1056" y="305" width="1" height="21" fill="#d0d0d0"/><rect x="1119" y="305" width="1" height="21" fill="#d0d0d0"/><rect x="1183" y="305" width="1" height="21" fill="#d0d0d0"/><rect x="1246" y="305" width="1" height="21" fill="#d0d0d0"/><rect x="1309" y="305" width="1" height="21" fill="#d0d0d0"/><rect x="1372" y="305" width="1" height="21" fill="#d0d0d0"/><rect x="1435" y="305" width="1" height="21" fill="#d0d0d0"/><rect x="1499" y="305" width="1" height="21" fill="#d0d0d0"/><rect x="1562" y="305" width="1" height="21" fill="#d0d0d0"/><rect x="305" y="326" width="1" height="21" fill="#d0d0d0"/><rect x="496" y="326" width="1" height="21" fill="#d0d0d0"/><rect x="649" y="326" width="1" height="21" fill="#d0d0d0"/><rect x="663" y="326" width="1" height="21" fill="#d0d0d0"/><rect x="733" y="326" width="1" height="21" fill="#d0d0d0"/><rect x="803" y="326" width="1" height="21" fill="#d0d0d0"/><rect x="866" y="326" width="1" height="21" fill="#d0d0d0"/><rect x="929" y="326" width="1" height="21" fill="#d0d0d0"/><rect x="993" y="326" width="1" height="21" fill="#d0d0d0"/><rect x="1056" y="326" width="1" height="21" fill="#d0d0d0"/><rect x="1119" y="326" width="1" height="21" fill="#d0d0d0"/><rect x="1183" y="326" width="1" height="21" fill="#d0d0d0"/><rect x="1246" y="326" width="1" height="21" fill="#d0d0d0"/><rect x="1309" y="326" width="1" height="21" fill="#d0d0d0"/><rect x="1372" y="326" width="1" height="21" fill="#d0d0d0"/><rect x="1435" y="326" width="1" height="21" fill="#d0d0d0"/><rect x="1499" y="326" width="1" height="21" fill="#d0d0d0"/><rect x="1562" y="326" width="1" height="21" fill="#d0d0d0"/><rect x="305" y="347" width="1" height="21" fill="#d0d0d0"/><rect x="496" y="347" width="1" height="21" fill="#d0d0d0"/><rect x="649" y="347" width="1" height="21" fill="#d0d0d0"/><rect x="663" y="347" width="1" height="21" fill="#d0d0d0"/><rect x="733" y="347" width="1" height="21" fill="#d0d0d0"/><rect x="803" y="347" width="1" height="21" fill="#d0d0d0"/><rect x="866" y="347" width="1" height="21" fill="#d0d0d0"/><rect x="929" y="347" width="1" height="21" fill="#d0d0d0"/><rect x="993" y="347" width="1" height="21" fill="#d0d0d0"/><rect x="1056" y="347" width="1" height="21" fill="#d0d0d0"/><rect x="1119" y="347" width="1" height="21" fill="#d0d0d0"/><rect x="1183" y="347" width="1" height="21" fill="#d0d0d0"/><rect x="1246" y="347" width="1" height="21" fill="#d0d0d0"/><rect x="1309" y="347" width="1" height="21" fill="#d0d0d0"/><rect x="1372" y="347" width="1" height="21" fill="#d0d0d0"/><rect x="1435" y="347" width="1" height="21" fill="#d0d0d0"/><rect x="1499" y="347" width="1" height="21" fill="#d0d0d0"/><rect x="1562" y="347" width="1" height="21" fill="#d0d0d0"/><rect x="305" y="368" width="1" height="21" fill="#d0d0d0"/><rect x="496" y="368" width="1" height="21" fill="#d0d0d0"/><rect x="649" y="368" width="1" height="21" fill="#d0d0d0"/><rect x="663" y="368" width="1" height="21" fill="#d0d0d0"/><rect x="733" y="368" width="1" height="21" fill="#d0d0d0"/><rect x="803" y="368" width="1" height="21" fill="#d0d0d0"/><rect x="866" y="368" width="1" height="21" fill="#d0d0d0"/><rect x="929" y="368" width="1" height="21" fill="#d0d0d0"/><rect x="993" y="368" width="1" height="21" fill="#d0d0d0"/><rect x="1056" y="368" width="1" height="21" fill="#d0d0d0"/><rect x="1119" y="368" width="1" height="21" fill="#d0d0d0"/><rect x="1183" y="368" width="1" height="21" fill="#d0d0d0"/><rect x="1246" y="368" width="1" height="21" fill="#d0d0d0"/><rect x="1309" y="368" width="1" height="21" fill="#d0d0d0"/><rect x="1372" y="368" width="1" height="21" fill="#d0d0d0"/><rect x="1435" y="368" width="1" height="21" fill="#d0d0d0"/><rect x="1499" y="368" width="1" height="21" fill="#d0d0d0"/><rect x="1562" y="368" width="1" height="21" fill="#d0d0d0"/><rect x="211" y="389" width="1" height="20" fill="#d0d0d0"/><rect x="305" y="389" width="1" height="20" fill="#d0d0d0"/><rect x="496" y="389" width="1" height="20" fill="#d0d0d0"/><rect x="649" y="389" width="1" height="20" fill="#d0d0d0"/><rect x="663" y="389" width="1" height="20" fill="#d0d0d0"/><rect x="733" y="389" width="1" height="20" fill="#d0d0d0"/><rect x="803" y="389" width="1" height="20" fill="#d0d0d0"/><rect x="866" y="389" width="1" height="20" fill="#d0d0d0"/><rect x="929" y="389" width="1" height="20" fill="#d0d0d0"/><rect x="993" y="389" width="1" height="20" fill="#d0d0d0"/><rect x="1056" y="389" width="1" height="20" fill="#d0d0d0"/><rect x="1119" y="389" width="1" height="20" fill="#d0d0d0"/><rect x="1183" y="389" width="1" height="20" fill="#d0d0d0"/><rect x="1246" y="389" width="1" height="20" fill="#d0d0d0"/><rect x="1309" y="389" width="1" height="20" fill="#d0d0d0"/><rect x="1372" y="389" width="1" height="20" fill="#d0d0d0"/><rect x="1435" y="389" width="1" height="20" fill="#d0d0d0"/><rect x="1499" y="389" width="1" height="20" fill="#d0d0d0"/><rect x="1562" y="389" width="1" height="20" fill="#d0d0d0"/><rect x="305" y="409" width="1" height="21" fill="#d0d0d0"/><rect x="496" y="409" width="1" height="21" fill="#d0d0d0"/><rect x="649" y="409" width="1" height="21" fill="#d0d0d0"/><rect x="663" y="409" width="1" height="21" fill="#d0d0d0"/><rect x="733" y="409" width="1" height="21" fill="#d0d0d0"/><rect x="803" y="409" width="1" height="21" fill="#d0d0d0"/><rect x="866" y="409" width="1" height="21" fill="#d0d0d0"/><rect x="929" y="409" width="1" height="21" fill="#d0d0d0"/><rect x="993" y="409" width="1" height="21" fill="#d0d0d0"/><rect x="1056" y="409" width="1" height="21" fill="#d0d0d0"/><rect x="1119" y="409" width="1" height="21" fill="#d0d0d0"/><rect x="1183" y="409" width="1" height="21" fill="#d0d0d0"/><rect x="1246" y="409" width="1" height="21" fill="#d0d0d0"/><rect x="1309" y="409" width="1" height="21" fill="#d0d0d0"/><rect x="1372" y="409" width="1" height="21" fill="#d0d0d0"/><rect x="1435" y="409" width="1" height="21" fill="#d0d0d0"/><rect x="1499" y="409" width="1" height="21" fill="#d0d0d0"/><rect x="1562" y="409" width="1" height="21" fill="#d0d0d0"/><rect x="305" y="430" width="1" height="21" fill="#d0d0d0"/><rect x="496" y="430" width="1" height="21" fill="#d0d0d0"/><rect x="649" y="430" width="1" height="21" fill="#d0d0d0"/><rect x="663" y="430" width="1" height="21" fill="#d0d0d0"/><rect x="733" y="430" width="1" height="21" fill="#d0d0d0"/><rect x="803" y="430" width="1" height="21" fill="#d0d0d0"/><rect x="866" y="430" width="1" height="21" fill="#d0d0d0"/><rect x="929" y="430" width="1" height="21" fill="#d0d0d0"/><rect x="993" y="430" width="1" height="21" fill="#d0d0d0"/><rect x="1056" y="430" width="1" height="21" fill="#d0d0d0"/><rect x="1119" y="430" width="1" height="21" fill="#d0d0d0"/><rect x="1183" y="430" width="1" height="21" fill="#d0d0d0"/><rect x="1246" y="430" width="1" height="21" fill="#d0d0d0"/><rect x="1309" y="430" width="1" height="21" fill="#d0d0d0"/><rect x="1372" y="430" width="1" height="21" fill="#d0d0d0"/><rect x="1435" y="430" width="1" height="21" fill="#d0d0d0"/><rect x="1499" y="430" width="1" height="21" fill="#d0d0d0"/><rect x="1562" y="430" width="1" height="21" fill="#d0d0d0"/><rect x="211" y="451" width="1" height="20" fill="#d0d0d0"/><rect x="305" y="451" width="1" height="20" fill="#d0d0d0"/><rect x="496" y="451" width="1" height="20" fill="#d0d0d0"/><rect x="649" y="451" width="1" height="20" fill="#d0d0d0"/><rect x="663" y="451" width="1" height="20" fill="#d0d0d0"/><rect x="733" y="451" width="1" height="20" fill="#d0d0d0"/><rect x="803" y="451" width="1" height="20" fill="#d0d0d0"/><rect x="866" y="451" width="1" height="20" fill="#d0d0d0"/><rect x="929" y="451" width="1" height="20" fill="#d0d0d0"/><rect x="993" y="451" width="1" height="20" fill="#d0d0d0"/><rect x="1056" y="451" width="1" height="20" fill="#d0d0d0"/><rect x="1119" y="451" width="1" height="20" fill="#d0d0d0"/><rect x="1183" y="451" width="1" height="20" fill="#d0d0d0"/><rect x="1246" y="451" width="1" height="20" fill="#d0d0d0"/><rect x="1309" y="451" width="1" height="20" fill="#d0d0d0"/><rect x="1372" y="451" width="1" height="20" fill="#d0d0d0"/><rect x="1435" y="451" width="1" height="20" fill="#d0d0d0"/><rect x="1499" y="451" width="1" height="20" fill="#d0d0d0"/><rect x="1562" y="451" width="1" height="20" fill="#d0d0d0"/><rect x="305" y="471" width="1" height="21" fill="#d0d0d0"/><rect x="496" y="471" width="1" height="21" fill="#d0d0d0"/><rect x="649" y="471" width="1" height="21" fill="#d0d0d0"/><rect x="663" y="471" width="1" height="21" fill="#d0d0d0"/><rect x="733" y="471" width="1" height="21" fill="#d0d0d0"/><rect x="803" y="471" width="1" height="21" fill="#d0d0d0"/><rect x="866" y="471" width="1" height="21" fill="#d0d0d0"/><rect x="929" y="471" width="1" height="21" fill="#d0d0d0"/><rect x="993" y="471" width="1" height="21" fill="#d0d0d0"/><rect x="1056" y="471" width="1" height="21" fill="#d0d0d0"/><rect x="1119" y="471" width="1" height="21" fill="#d0d0d0"/><rect x="1183" y="471" width="1" height="21" fill="#d0d0d0"/><rect x="1246" y="471" width="1" height="21" fill="#d0d0d0"/><rect x="1309" y="471" width="1" height="21" fill="#d0d0d0"/><rect x="1372" y="471" width="1" height="21" fill="#d0d0d0"/><rect x="1435" y="471" width="1" height="21" fill="#d0d0d0"/><rect x="1499" y="471" width="1" height="21" fill="#d0d0d0"/><rect x="1562" y="471" width="1" height="21" fill="#d0d0d0"/><rect x="305" y="492" width="1" height="20" fill="#d0d0d0"/><rect x="496" y="492" width="1" height="20" fill="#d0d0d0"/><rect x="649" y="492" width="1" height="20" fill="#d0d0d0"/><rect x="663" y="492" width="1" height="20" fill="#d0d0d0"/><rect x="733" y="492" width="1" height="20" fill="#d0d0d0"/><rect x="803" y="492" width="1" height="20" fill="#d0d0d0"/><rect x="866" y="492" width="1" height="20" fill="#d0d0d0"/><rect x="929" y="492" width="1" height="20" fill="#d0d0d0"/><rect x="993" y="492" width="1" height="20" fill="#d0d0d0"/><rect x="1056" y="492" width="1" height="20" fill="#d0d0d0"/><rect x="1119" y="492" width="1" height="20" fill="#d0d0d0"/><rect x="1183" y="492" width="1" height="20" fill="#d0d0d0"/><rect x="1246" y="492" width="1" height="20" fill="#d0d0d0"/><rect x="1309" y="492" width="1" height="20" fill="#d0d0d0"/><rect x="1372" y="492" width="1" height="20" fill="#d0d0d0"/><rect x="1435" y="492" width="1" height="20" fill="#d0d0d0"/><rect x="1499" y="492" width="1" height="20" fill="#d0d0d0"/><rect x="1562" y="492" width="1" height="20" fill="#d0d0d0"/><rect x="305" y="512" width="1" height="21" fill="#d0d0d0"/><rect x="496" y="512" width="1" height="21" fill="#d0d0d0"/><rect x="649" y="512" width="1" height="21" fill="#d0d0d0"/><rect x="663" y="512" width="1" height="21" fill="#d0d0d0"/><rect x="733" y="512" width="1" height="21" fill="#d0d0d0"/><rect x="803" y="512" width="1" height="21" fill="#d0d0d0"/><rect x="866" y="512" width="1" height="21" fill="#d0d0d0"/><rect x="929" y="512" width="1" height="21" fill="#d0d0d0"/><rect x="993" y="512" width="1" height="21" fill="#d0d0d0"/><rect x="1056" y="512" width="1" height="21" fill="#d0d0d0"/><rect x="1119" y="512" width="1" height="21" fill="#d0d0d0"/><rect x="1183" y="512" width="1" height="21" fill="#d0d0d0"/><rect x="1246" y="512" width="1" height="21" fill="#d0d0d0"/><rect x="1309" y="512" width="1" height="21" fill="#d0d0d0"/><rect x="1372" y="512" width="1" height="21" fill="#d0d0d0"/><rect x="1435" y="512" width="1" height="21" fill="#d0d0d0"/><rect x="1499" y="512" width="1" height="21" fill="#d0d0d0"/><rect x="1562" y="512" width="1" height="21" fill="#d0d0d0"/><rect x="211" y="533" width="1" height="21" fill="#d0d0d0"/><rect x="305" y="533" width="1" height="21" fill="#d0d0d0"/><rect x="496" y="533" width="1" height="21" fill="#d0d0d0"/><rect x="649" y="533" width="1" height="21" fill="#d0d0d0"/><rect x="663" y="533" width="1" height="21" fill="#d0d0d0"/><rect x="733" y="533" width="1" height="21" fill="#d0d0d0"/><rect x="803" y="533" width="1" height="21" fill="#d0d0d0"/><rect x="866" y="533" width="1" height="21" fill="#d0d0d0"/><rect x="929" y="533" width="1" height="21" fill="#d0d0d0"/><rect x="993" y="533" width="1" height="21" fill="#d0d0d0"/><rect x="1056" y="533" width="1" height="21" fill="#d0d0d0"/><rect x="1119" y="533" width="1" height="21" fill="#d0d0d0"/><rect x="1183" y="533" width="1" height="21" fill="#d0d0d0"/><rect x="1246" y="533" width="1" height="21" fill="#d0d0d0"/><rect x="1309" y="533" width="1" height="21" fill="#d0d0d0"/><rect x="1372" y="533" width="1" height="21" fill="#d0d0d0"/><rect x="1435" y="533" width="1" height="21" fill="#d0d0d0"/><rect x="1499" y="533" width="1" height="21" fill="#d0d0d0"/><rect x="1562" y="533" width="1" height="21" fill="#d0d0d0"/><rect x="211" y="554" width="1" height="20" fill="#d0d0d0"/><rect x="305" y="554" width="1" height="20" fill="#d0d0d0"/><rect x="496" y="554" width="1" height="20" fill="#d0d0d0"/><rect x="649" y="554" width="1" height="20" fill="#d0d0d0"/><rect x="663" y="554" width="1" height="20" fill="#d0d0d0"/><rect x="733" y="554" width="1" height="20" fill="#d0d0d0"/><rect x="803" y="554" width="1" height="20" fill="#d0d0d0"/><rect x="866" y="554" width="1" height="20" fill="#d0d0d0"/><rect x="929" y="554" width="1" height="20" fill="#d0d0d0"/><rect x="993" y="554" width="1" height="20" fill="#d0d0d0"/><rect x="1056" y="554" width="1" height="20" fill="#d0d0d0"/><rect x="1119" y="554" width="1" height="20" fill="#d0d0d0"/><rect x="1183" y="554" width="1" height="20" fill="#d0d0d0"/><rect x="1246" y="554" width="1" height="20" fill="#d0d0d0"/><rect x="1309" y="554" width="1" height="20" fill="#d0d0d0"/><rect x="1372" y="554" width="1" height="20" fill="#d0d0d0"/><rect x="1435" y="554" width="1" height="20" fill="#d0d0d0"/><rect x="1499" y="554" width="1" height="20" fill="#d0d0d0"/><rect x="1562" y="554" width="1" height="20" fill="#d0d0d0"/><rect x="211" y="574" width="1" height="19" fill="#d0d0d0"/><rect x="305" y="574" width="1" height="19" fill="#d0d0d0"/><rect x="496" y="574" width="1" height="19" fill="#d0d0d0"/><rect x="649" y="574" width="1" height="19" fill="#d0d0d0"/><rect x="663" y="574" width="1" height="19" fill="#d0d0d0"/><rect x="733" y="574" width="1" height="19" fill="#d0d0d0"/><rect x="803" y="574" width="1" height="19" fill="#d0d0d0"/><rect x="866" y="574" width="1" height="19" fill="#d0d0d0"/><rect x="929" y="574" width="1" height="19" fill="#d0d0d0"/><rect x="993" y="574" width="1" height="19" fill="#d0d0d0"/><rect x="1056" y="574" width="1" height="19" fill="#d0d0d0"/><rect x="1119" y="574" width="1" height="19" fill="#d0d0d0"/><rect x="1183" y="574" width="1" height="19" fill="#d0d0d0"/><rect x="1246" y="574" width="1" height="19" fill="#d0d0d0"/><rect x="1309" y="574" width="1" height="19" fill="#d0d0d0"/><rect x="1372" y="574" width="1" height="19" fill="#d0d0d0"/><rect x="1435" y="574" width="1" height="19" fill="#d0d0d0"/><rect x="1499" y="574" width="1" height="19" fill="#d0d0d0"/><rect x="1562" y="574" width="1" height="19" fill="#d0d0d0"/><rect x="211" y="593" width="1" height="20" fill="#d0d0d0"/><rect x="305" y="593" width="1" height="20" fill="#d0d0d0"/><rect x="496" y="593" width="1" height="20" fill="#d0d0d0"/><rect x="649" y="593" width="1" height="20" fill="#d0d0d0"/><rect x="663" y="593" width="1" height="20" fill="#d0d0d0"/><rect x="733" y="593" width="1" height="20" fill="#d0d0d0"/><rect x="803" y="593" width="1" height="20" fill="#d0d0d0"/><rect x="866" y="593" width="1" height="20" fill="#d0d0d0"/><rect x="929" y="593" width="1" height="20" fill="#d0d0d0"/><rect x="993" y="593" width="1" height="20" fill="#d0d0d0"/><rect x="1056" y="593" width="1" height="20" fill="#d0d0d0"/><rect x="1119" y="593" width="1" height="20" fill="#d0d0d0"/><rect x="1183" y="593" width="1" height="20" fill="#d0d0d0"/><rect x="1246" y="593" width="1" height="20" fill="#d0d0d0"/><rect x="1309" y="593" width="1" height="20" fill="#d0d0d0"/><rect x="1372" y="593" width="1" height="20" fill="#d0d0d0"/><rect x="1435" y="593" width="1" height="20" fill="#d0d0d0"/><rect x="1499" y="593" width="1" height="20" fill="#d0d0d0"/><rect x="1562" y="593" width="1" height="20" fill="#d0d0d0"/><rect x="211" y="613" width="1" height="20" fill="#d0d0d0"/><rect x="305" y="613" width="1" height="20" fill="#d0d0d0"/><rect x="496" y="613" width="1" height="20" fill="#d0d0d0"/><rect x="649" y="613" width="1" height="20" fill="#d0d0d0"/><rect x="663" y="613" width="1" height="20" fill="#d0d0d0"/><rect x="733" y="613" width="1" height="20" fill="#d0d0d0"/><rect x="803" y="613" width="1" height="20" fill="#d0d0d0"/><rect x="866" y="613" width="1" height="20" fill="#d0d0d0"/><rect x="929" y="613" width="1" height="20" fill="#d0d0d0"/><rect x="993" y="613" width="1" height="20" fill="#d0d0d0"/><rect x="1056" y="613" width="1" height="20" fill="#d0d0d0"/><rect x="1119" y="613" width="1" height="20" fill="#d0d0d0"/><rect x="1183" y="613" width="1" height="20" fill="#d0d0d0"/><rect x="1246" y="613" width="1" height="20" fill="#d0d0d0"/><rect x="1309" y="613" width="1" height="20" fill="#d0d0d0"/><rect x="1372" y="613" width="1" height="20" fill="#d0d0d0"/><rect x="1435" y="613" width="1" height="20" fill="#d0d0d0"/><rect x="1499" y="613" width="1" height="20" fill="#d0d0d0"/><rect x="1562" y="613" width="1" height="20" fill="#d0d0d0"/><rect x="211" y="633" width="1" height="20" fill="#d0d0d0"/><rect x="305" y="633" width="1" height="20" fill="#d0d0d0"/><rect x="496" y="633" width="1" height="20" fill="#d0d0d0"/><rect x="649" y="633" width="1" height="20" fill="#d0d0d0"/><rect x="663" y="633" width="1" height="20" fill="#d0d0d0"/><rect x="733" y="633" width="1" height="20" fill="#d0d0d0"/><rect x="803" y="633" width="1" height="20" fill="#d0d0d0"/><rect x="866" y="633" width="1" height="20" fill="#d0d0d0"/><rect x="929" y="633" width="1" height="20" fill="#d0d0d0"/><rect x="993" y="633" width="1" height="20" fill="#d0d0d0"/><rect x="1056" y="633" width="1" height="20" fill="#d0d0d0"/><rect x="1119" y="633" width="1" height="20" fill="#d0d0d0"/><rect x="1183" y="633" width="1" height="20" fill="#d0d0d0"/><rect x="1246" y="633" width="1" height="20" fill="#d0d0d0"/><rect x="1309" y="633" width="1" height="20" fill="#d0d0d0"/><rect x="1372" y="633" width="1" height="20" fill="#d0d0d0"/><rect x="1435" y="633" width="1" height="20" fill="#d0d0d0"/><rect x="1499" y="633" width="1" height="20" fill="#d0d0d0"/><rect x="1562" y="633" width="1" height="20" fill="#d0d0d0"/><rect x="211" y="653" width="1" height="19" fill="#d0d0d0"/><rect x="305" y="653" width="1" height="19" fill="#d0d0d0"/><rect x="496" y="653" width="1" height="19" fill="#d0d0d0"/><rect x="649" y="653" width="1" height="19" fill="#d0d0d0"/><rect x="663" y="653" width="1" height="19" fill="#d0d0d0"/><rect x="733" y="653" width="1" height="19" fill="#d0d0d0"/><rect x="803" y="653" width="1" height="19" fill="#d0d0d0"/><rect x="866" y="653" width="1" height="19" fill="#d0d0d0"/><rect x="929" y="653" width="1" height="19" fill="#d0d0d0"/><rect x="993" y="653" width="1" height="19" fill="#d0d0d0"/><rect x="1056" y="653" width="1" height="19" fill="#d0d0d0"/><rect x="1119" y="653" width="1" height="19" fill="#d0d0d0"/><rect x="1183" y="653" width="1" height="19" fill="#d0d0d0"/><rect x="1246" y="653" width="1" height="19" fill="#d0d0d0"/><rect x="1309" y="653" width="1" height="19" fill="#d0d0d0"/><rect x="1372" y="653" width="1" height="19" fill="#d0d0d0"/><rect x="1435" y="653" width="1" height="19" fill="#d0d0d0"/><rect x="1499" y="653" width="1" height="19" fill="#d0d0d0"/><rect x="1562" y="653" width="1" height="19" fill="#d0d0d0"/><rect x="305" y="672" width="1" height="21" fill="#d0d0d0"/><rect x="496" y="672" width="1" height="21" fill="#d0d0d0"/><rect x="649" y="672" width="1" height="21" fill="#d0d0d0"/><rect x="663" y="672" width="1" height="21" fill="#d0d0d0"/><rect x="733" y="672" width="1" height="21" fill="#d0d0d0"/><rect x="803" y="672" width="1" height="21" fill="#d0d0d0"/><rect x="866" y="672" width="1" height="21" fill="#d0d0d0"/><rect x="929" y="672" width="1" height="21" fill="#d0d0d0"/><rect x="993" y="672" width="1" height="21" fill="#d0d0d0"/><rect x="1056" y="672" width="1" height="21" fill="#d0d0d0"/><rect x="1119" y="672" width="1" height="21" fill="#d0d0d0"/><rect x="1183" y="672" width="1" height="21" fill="#d0d0d0"/><rect x="1246" y="672" width="1" height="21" fill="#d0d0d0"/><rect x="1309" y="672" width="1" height="21" fill="#d0d0d0"/><rect x="1372" y="672" width="1" height="21" fill="#d0d0d0"/><rect x="1435" y="672" width="1" height="21" fill="#d0d0d0"/><rect x="1499" y="672" width="1" height="21" fill="#d0d0d0"/><rect x="1562" y="672" width="1" height="21" fill="#d0d0d0"/><rect x="649" y="693" width="1" height="20" fill="#d0d0d0"/><rect x="663" y="693" width="1" height="20" fill="#d0d0d0"/><rect x="733" y="693" width="1" height="20" fill="#d0d0d0"/><rect x="803" y="693" width="1" height="20" fill="#d0d0d0"/><rect x="866" y="693" width="1" height="20" fill="#d0d0d0"/><rect x="929" y="693" width="1" height="20" fill="#d0d0d0"/><rect x="993" y="693" width="1" height="20" fill="#d0d0d0"/><rect x="1056" y="693" width="1" height="20" fill="#d0d0d0"/><rect x="1119" y="693" width="1" height="20" fill="#d0d0d0"/><rect x="1183" y="693" width="1" height="20" fill="#d0d0d0"/><rect x="1246" y="693" width="1" height="20" fill="#d0d0d0"/><rect x="1309" y="693" width="1" height="20" fill="#d0d0d0"/><rect x="1372" y="693" width="1" height="20" fill="#d0d0d0"/><rect x="1435" y="693" width="1" height="20" fill="#d0d0d0"/><rect x="1499" y="693" width="1" height="20" fill="#d0d0d0"/><rect x="1562" y="693" width="1" height="20" fill="#d0d0d0"/><rect x="649" y="713" width="1" height="20" fill="#d0d0d0"/><rect x="663" y="713" width="1" height="20" fill="#d0d0d0"/><rect x="733" y="713" width="1" height="20" fill="#d0d0d0"/><rect x="803" y="713" width="1" height="20" fill="#d0d0d0"/><rect x="866" y="713" width="1" height="20" fill="#d0d0d0"/><rect x="929" y="713" width="1" height="20" fill="#d0d0d0"/><rect x="993" y="713" width="1" height="20" fill="#d0d0d0"/><rect x="1056" y="713" width="1" height="20" fill="#d0d0d0"/><rect x="1119" y="713" width="1" height="20" fill="#d0d0d0"/><rect x="1183" y="713" width="1" height="20" fill="#d0d0d0"/><rect x="1246" y="713" width="1" height="20" fill="#d0d0d0"/><rect x="1309" y="713" width="1" height="20" fill="#d0d0d0"/><rect x="1372" y="713" width="1" height="20" fill="#d0d0d0"/><rect x="1435" y="713" width="1" height="20" fill="#d0d0d0"/><rect x="1499" y="713" width="1" height="20" fill="#d0d0d0"/><rect x="1562" y="713" width="1" height="20" fill="#d0d0d0"/><rect x="649" y="733" width="1" height="20" fill="#d0d0d0"/><rect x="663" y="733" width="1" height="20" fill="#d0d0d0"/><rect x="733" y="733" width="1" height="20" fill="#d0d0d0"/><rect x="803" y="733" width="1" height="20" fill="#d0d0d0"/><rect x="866" y="733" width="1" height="20" fill="#d0d0d0"/><rect x="929" y="733" width="1" height="20" fill="#d0d0d0"/><rect x="993" y="733" width="1" height="20" fill="#d0d0d0"/><rect x="1056" y="733" width="1" height="20" fill="#d0d0d0"/><rect x="1119" y="733" width="1" height="20" fill="#d0d0d0"/><rect x="1183" y="733" width="1" height="20" fill="#d0d0d0"/><rect x="1246" y="733" width="1" height="20" fill="#d0d0d0"/><rect x="1309" y="733" width="1" height="20" fill="#d0d0d0"/><rect x="1372" y="733" width="1" height="20" fill="#d0d0d0"/><rect x="1435" y="733" width="1" height="20" fill="#d0d0d0"/><rect x="1499" y="733" width="1" height="20" fill="#d0d0d0"/><rect x="1562" y="733" width="1" height="20" fill="#d0d0d0"/><rect x="649" y="753" width="1" height="19" fill="#d0d0d0"/><rect x="663" y="753" width="1" height="19" fill="#d0d0d0"/><rect x="733" y="753" width="1" height="19" fill="#d0d0d0"/><rect x="803" y="753" width="1" height="19" fill="#d0d0d0"/><rect x="866" y="753" width="1" height="19" fill="#d0d0d0"/><rect x="929" y="753" width="1" height="19" fill="#d0d0d0"/><rect x="993" y="753" width="1" height="19" fill="#d0d0d0"/><rect x="1056" y="753" width="1" height="19" fill="#d0d0d0"/><rect x="1119" y="753" width="1" height="19" fill="#d0d0d0"/><rect x="1183" y="753" width="1" height="19" fill="#d0d0d0"/><rect x="1246" y="753" width="1" height="19" fill="#d0d0d0"/><rect x="1309" y="753" width="1" height="19" fill="#d0d0d0"/><rect x="1372" y="753" width="1" height="19" fill="#d0d0d0"/><rect x="1435" y="753" width="1" height="19" fill="#d0d0d0"/><rect x="1499" y="753" width="1" height="19" fill="#d0d0d0"/><rect x="1562" y="753" width="1" height="19" fill="#d0d0d0"/><rect x="649" y="772" width="1" height="20" fill="#d0d0d0"/><rect x="663" y="772" width="1" height="20" fill="#d0d0d0"/><rect x="733" y="772" width="1" height="20" fill="#d0d0d0"/><rect x="803" y="772" width="1" height="20" fill="#d0d0d0"/><rect x="866" y="772" width="1" height="20" fill="#d0d0d0"/><rect x="929" y="772" width="1" height="20" fill="#d0d0d0"/><rect x="993" y="772" width="1" height="20" fill="#d0d0d0"/><rect x="1056" y="772" width="1" height="20" fill="#d0d0d0"/><rect x="1119" y="772" width="1" height="20" fill="#d0d0d0"/><rect x="1183" y="772" width="1" height="20" fill="#d0d0d0"/><rect x="1246" y="772" width="1" height="20" fill="#d0d0d0"/><rect x="1309" y="772" width="1" height="20" fill="#d0d0d0"/><rect x="1372" y="772" width="1" height="20" fill="#d0d0d0"/><rect x="1435" y="772" width="1" height="20" fill="#d0d0d0"/><rect x="1499" y="772" width="1" height="20" fill="#d0d0d0"/><rect x="1562" y="772" width="1" height="20" fill="#d0d0d0"/><rect x="649" y="792" width="1" height="8" fill="#d0d0d0"/><rect x="663" y="792" width="1" height="8" fill="#d0d0d0"/><rect x="733" y="792" width="1" height="8" fill="#d0d0d0"/><rect x="803" y="792" width="1" height="8" fill="#d0d0d0"/><rect x="866" y="792" width="1" height="8" fill="#d0d0d0"/><rect x="929" y="792" width="1" height="8" fill="#d0d0d0"/><rect x="993" y="792" width="1" height="8" fill="#d0d0d0"/><rect x="1056" y="792" width="1" height="8" fill="#d0d0d0"/><rect x="1119" y="792" width="1" height="8" fill="#d0d0d0"/><rect x="1183" y="792" width="1" height="8" fill="#d0d0d0"/><rect x="1246" y="792" width="1" height="8" fill="#d0d0d0"/><rect x="1309" y="792" width="1" height="8" fill="#d0d0d0"/><rect x="1372" y="792" width="1" height="8" fill="#d0d0d0"/><rect x="1435" y="792" width="1" height="8" fill="#d0d0d0"/><rect x="1499" y="792" width="1" height="8" fill="#d0d0d0"/><rect x="1562" y="792" width="1" height="8" fill="#d0d0d0"/><rect x="33" y="240" width="1533" height="1" fill="#d9d9d9"/><rect x="33" y="264" width="1533" height="1" fill="#d9d9d9"/><rect x="33" y="284" width="1533" height="1" fill="#d9d9d9"/><rect x="33" y="305" width="1533" height="1" fill="#d9d9d9"/><rect x="33" y="326" width="1533" height="1" fill="#d9d9d9"/><rect x="33" y="347" width="1533" height="1" fill="#d9d9d9"/><rect x="33" y="368" width="1533" height="1" fill="#d9d9d9"/><rect x="33" y="389" width="1533" height="1" fill="#d9d9d9"/><rect x="33" y="409" width="1533" height="1" fill="#d9d9d9"/><rect x="33" y="430" width="1533" height="1" fill="#d9d9d9"/><rect x="33" y="451" width="1533" height="1" fill="#d9d9d9"/><rect x="33" y="471" width="1533" height="1" fill="#d9d9d9"/><rect x="33" y="492" width="1533" height="1" fill="#d9d9d9"/><rect x="33" y="512" width="1533" height="1" fill="#d9d9d9"/><rect x="33" y="533" width="1533" height="1" fill="#d9d9d9"/><rect x="33" y="554" width="1533" height="1" fill="#d9d9d9"/><rect x="33" y="574" width="1533" height="1" fill="#d9d9d9"/><rect x="33" y="593" width="1533" height="1" fill="#d9d9d9"/><rect x="33" y="613" width="1533" height="1" fill="#d9d9d9"/><rect x="33" y="633" width="1533" height="1" fill="#d9d9d9"/><rect x="33" y="653" width="1533" height="1" fill="#d9d9d9"/><rect x="33" y="672" width="1533" height="1" fill="#d9d9d9"/><rect x="33" y="693" width="1533" height="1" fill="#d9d9d9"/><rect x="33" y="713" width="1533" height="1" fill="#d9d9d9"/><rect x="33" y="733" width="1533" height="1" fill="#d9d9d9"/><rect x="33" y="753" width="1533" height="1" fill="#d9d9d9"/><rect x="33" y="772" width="1533" height="1" fill="#d9d9d9"/><rect x="33" y="792" width="1533" height="1" fill="#d9d9d9"/></svg>
<div class="a" style="left:33px;top:263px;width:617px;height:2px;background:#262626"></div>
<svg style="left:0;top:0" width="1588" height="857" shape-rendering="crispEdges"><line x1="305" y1="284.5" x2="650" y2="284.5" stroke="#1a1a1a" stroke-width="1" stroke-dasharray="1.2 0.8"/><line x1="305" y1="305.5" x2="650" y2="305.5" stroke="#1a1a1a" stroke-width="1" stroke-dasharray="1.2 0.8"/><line x1="305" y1="326.5" x2="650" y2="326.5" stroke="#1a1a1a" stroke-width="1" stroke-dasharray="1.2 0.8"/><line x1="305" y1="347.5" x2="650" y2="347.5" stroke="#1a1a1a" stroke-width="1" stroke-dasharray="1.2 0.8"/><line x1="305" y1="368.5" x2="650" y2="368.5" stroke="#1a1a1a" stroke-width="1" stroke-dasharray="1.2 0.8"/><line x1="305" y1="389.5" x2="650" y2="389.5" stroke="#1a1a1a" stroke-width="1" stroke-dasharray="1.2 0.8"/><line x1="305" y1="409.5" x2="650" y2="409.5" stroke="#1a1a1a" stroke-width="1" stroke-dasharray="1.2 0.8"/><line x1="305" y1="430.5" x2="650" y2="430.5" stroke="#1a1a1a" stroke-width="1" stroke-dasharray="1.2 0.8"/><line x1="305" y1="451.5" x2="650" y2="451.5" stroke="#1a1a1a" stroke-width="1" stroke-dasharray="1.2 0.8"/><line x1="305" y1="471.5" x2="650" y2="471.5" stroke="#1a1a1a" stroke-width="1" stroke-dasharray="1.2 0.8"/><line x1="305" y1="492.5" x2="650" y2="492.5" stroke="#1a1a1a" stroke-width="1" stroke-dasharray="1.2 0.8"/><line x1="305" y1="512.5" x2="650" y2="512.5" stroke="#1a1a1a" stroke-width="1" stroke-dasharray="1.2 0.8"/><line x1="305" y1="533.5" x2="650" y2="533.5" stroke="#1a1a1a" stroke-width="1" stroke-dasharray="1.2 0.8"/></svg>
<div class="a" style="left:8px;top:204px;width:1558px;height:16px;background:#e6e6e6"></div>
<svg style="left:0;top:0" width="1588" height="857" shape-rendering="crispEdges"><rect x="33" y="205" width="1" height="15" fill="#c6c6c6"/><rect x="211" y="205" width="1" height="15" fill="#c6c6c6"/><rect x="305" y="205" width="1" height="15" fill="#c6c6c6"/><rect x="496" y="205" width="1" height="15" fill="#c6c6c6"/><rect x="649" y="205" width="1" height="15" fill="#c6c6c6"/><rect x="663" y="205" width="1" height="15" fill="#c6c6c6"/><rect x="733" y="205" width="1" height="15" fill="#c6c6c6"/><rect x="803" y="205" width="1" height="15" fill="#c6c6c6"/><rect x="866" y="205" width="1" height="15" fill="#c6c6c6"/><rect x="929" y="205" width="1" height="15" fill="#c6c6c6"/><rect x="993" y="205" width="1" height="15" fill="#c6c6c6"/><rect x="1056" y="205" width="1" height="15" fill="#c6c6c6"/><rect x="1119" y="205" width="1" height="15" fill="#c6c6c6"/><rect x="1183" y="205" width="1" height="15" fill="#c6c6c6"/><rect x="1246" y="205" width="1" height="15" fill="#c6c6c6"/><rect x="1309" y="205" width="1" height="15" fill="#c6c6c6"/><rect x="1372" y="205" width="1" height="15" fill="#c6c6c6"/><rect x="1435" y="205" width="1" height="15" fill="#c6c6c6"/><rect x="1499" y="205" width="1" height="15" fill="#c6c6c6"/><rect x="1562" y="205" width="1" height="15" fill="#c6c6c6"/><rect x="8" y="220" width="1558" height="1" fill="#ababab"/><rect x="33" y="220" width="1" height="580" fill="#ababab"/><rect x="8" y="240" width="25" height="1" fill="#c6c6c6"/><rect x="8" y="264" width="25" height="1" fill="#c6c6c6"/><rect x="8" y="284" width="25" height="1" fill="#c6c6c6"/><rect x="8" y="305" width="25" height="1" fill="#c6c6c6"/><rect x="8" y="326" width="25" height="1" fill="#c6c6c6"/><rect x="8" y="347" width="25" height="1" fill="#c6c6c6"/><rect x="8" y="368" width="25" height="1" fill="#c6c6c6"/><rect x="8" y="389" width="25" height="1" fill="#c6c6c6"/><rect x="8" y="409" width="25" height="1" fill="#c6c6c6"/><rect x="8" y="430" width="25" height="1" fill="#c6c6c6"/><rect x="8" y="451" width="25" height="1" fill="#c6c6c6"/><rect x="8" y="471" width="25" height="1" fill="#c6c6c6"/><rect x="8" y="492" width="25" height="1" fill="#c6c6c6"/><rect x="8" y="512" width="25" height="1" fill="#c6c6c6"/><rect x="8" y="533" width="25" height="1" fill="#c6c6c6"/><rect x="8" y="554" width="25" height="1" fill="#c6c6c6"/><rect x="8" y="574" width="25" height="1" fill="#c6c6c6"/><rect x="8" y="593" width="25" height="1" fill="#c6c6c6"/><rect x="8" y="613" width="25" height="1" fill="#c6c6c6"/><rect x="8" y="633" width="25" height="1" fill="#c6c6c6"/><rect x="8" y="653" width="25" height="1" fill="#c6c6c6"/><rect x="8" y="672" width="25" height="1" fill="#c6c6c6"/><rect x="8" y="693" width="25" height="1" fill="#c6c6c6"/><rect x="8" y="713" width="25" height="1" fill="#c6c6c6"/><rect x="8" y="733" width="25" height="1" fill="#c6c6c6"/><rect x="8" y="753" width="25" height="1" fill="#c6c6c6"/><rect x="8" y="772" width="25" height="1" fill="#c6c6c6"/><rect x="8" y="792" width="25" height="1" fill="#c6c6c6"/><rect x="1566" y="220" width="1" height="580" fill="#ababab"/></svg>
<div class="a" style="left:306px;top:205px;width:190px;height:15px;background:#d2d2d2"></div>
<div class="a" style="left:305px;top:218px;width:192px;height:2px;background:#217346"></div>
<div class="a" style="left:8px;top:634px;width:25px;height:19px;background:#d2d2d2"></div>
<div class="a" style="left:31px;top:633px;width:2px;height:21px;background:#217346"></div>
<svg style="left:20px;top:207px" width="12" height="12"><polygon points="10,1 10,10 1,10" fill="#b4b4b4"/></svg>
<div class="t" style="left:-178.0px;width:600px;text-align:center;top:203.07px;font-size:13.5px;font-weight:normal;color:#222;">A</div>
<div class="t" style="left:-42.0px;width:600px;text-align:center;top:203.07px;font-size:13.5px;font-weight:normal;color:#222;">B</div>
<div class="t" style="left:100.5px;width:600px;text-align:center;top:203.07px;font-size:13.5px;font-weight:normal;color:#217346;">C</div>
<div class="t" style="left:272.5px;width:600px;text-align:center;top:203.07px;font-size:13.5px;font-weight:normal;color:#222;">D</div>
<div class="t" style="left:356.0px;width:600px;text-align:center;top:203.07px;font-size:13.5px;font-weight:normal;color:#222;">E</div>
<div class="t" style="left:398.0px;width:600px;text-align:center;top:203.07px;font-size:13.5px;font-weight:normal;color:#222;">F</div>
<div class="t" style="left:468.0px;width:600px;text-align:center;top:203.07px;font-size:13.5px;font-weight:normal;color:#222;">G</div>
<div class="t" style="left:534.5px;width:600px;text-align:center;top:203.07px;font-size:13.5px;font-weight:normal;color:#222;">H</div>
<div class="t" style="left:597.5px;width:600px;text-align:center;top:203.07px;font-size:13.5px;font-weight:normal;color:#222;">I</div>
<div class="t" style="left:661.0px;width:600px;text-align:center;top:203.07px;font-size:13.5px;font-weight:normal;color:#222;">J</div>
<div class="t" style="left:724.5px;width:600px;text-align:center;top:203.07px;font-size:13.5px;font-weight:normal;color:#222;">K</div>
<div class="t" style="left:787.5px;width:600px;text-align:center;top:203.07px;font-size:13.5px;font-weight:normal;color:#222;">L</div>
<div class="t" style="left:851.0px;width:600px;text-align:center;top:203.07px;font-size:13.5px;font-weight:normal;color:#222;">M</div>
<div class="t" style="left:914.5px;width:600px;text-align:center;top:203.07px;font-size:13.5px;font-weight:normal;color:#222;">N</div>
<div class="t" style="left:977.5px;width:600px;text-align:center;top:203.07px;font-size:13.5px;font-weight:normal;color:#222;">O</div>
<div class="t" style="left:1040.5px;width:600px;text-align:center;top:203.07px;font-size:13.5px;font-weight:normal;color:#222;">P</div>
<div class="t" style="left:1103.5px;width:600px;text-align:center;top:203.07px;font-size:13.5px;font-weight:normal;color:#222;">Q</div>
<div class="t" style="left:1167.0px;width:600px;text-align:center;top:203.07px;font-size:13.5px;font-weight:normal;color:#222;">R</div>
<div class="t" style="left:1230.5px;width:600px;text-align:center;top:203.07px;font-size:13.5px;font-weight:normal;color:#222;">S</div>
<div class="t" style="left:-279.5px;width:600px;text-align:center;top:222.47px;font-size:13.5px;font-weight:normal;color:#222;">1</div>
<div class="t" style="left:-279.5px;width:600px;text-align:center;top:246.47px;font-size:13.5px;font-weight:normal;color:#222;">2</div>
<div class="t" style="left:-279.5px;width:600px;text-align:center;top:266.47px;font-size:13.5px;font-weight:normal;color:#222;">3</div>
<div class="t" style="left:-279.5px;width:600px;text-align:center;top:287.47px;font-size:13.5px;font-weight:normal;color:#222;">4</div>
<div class="t" style="left:-279.5px;width:600px;text-align:center;top:308.47px;font-size:13.5px;font-weight:normal;color:#222;">5</div>
<div class="t" style="left:-279.5px;width:600px;text-align:center;top:329.47px;font-size:13.5px;font-weight:normal;color:#222;">6</div>
<div class="t" style="left:-279.5px;width:600px;text-align:center;top:350.47px;font-size:13.5px;font-weight:normal;color:#222;">7</div>
<div class="t" style="left:-279.5px;width:600px;text-align:center;top:371.47px;font-size:13.5px;font-weight:normal;color:#222;">8</div>
<div class="t" style="left:-279.5px;width:600px;text-align:center;top:391.47px;font-size:13.5px;font-weight:normal;color:#222;">9</div>
<div class="t" style="left:-279.5px;width:600px;text-align:center;top:412.47px;font-size:13.5px;font-weight:normal;color:#222;">10</div>
<div class="t" style="left:-279.5px;width:600px;text-align:center;top:433.47px;font-size:13.5px;font-weight:normal;color:#222;">11</div>
<div class="t" style="left:-279.5px;width:600px;text-align:center;top:453.47px;font-size:13.5px;font-weight:normal;color:#222;">12</div>
<div class="t" style="left:-279.5px;width:600px;text-align:center;top:474.47px;font-size:13.5px;font-weight:normal;color:#222;">13</div>
<div class="t" style="left:-279.5px;width:600px;text-align:center;top:494.47px;font-size:13.5px;font-weight:normal;color:#222;">14</div>
<div class="t" style="left:-279.5px;width:600px;text-align:center;top:515.47px;font-size:13.5px;font-weight:normal;color:#222;">15</div>
<div class="t" style="left:-279.5px;width:600px;text-align:center;top:536.47px;font-size:13.5px;font-weight:normal;color:#222;">16</div>
<div class="t" style="left:-279.5px;width:600px;text-align:center;top:556.47px;font-size:13.5px;font-weight:normal;color:#222;">17</div>
<div class="t" style="left:-279.5px;width:600px;text-align:center;top:575.47px;font-size:13.5px;font-weight:normal;color:#222;">18</div>
<div class="t" style="left:-279.5px;width:600px;text-align:center;top:595.47px;font-size:13.5px;font-weight:normal;color:#222;">19</div>
<div class="t" style="left:-279.5px;width:600px;text-align:center;top:615.47px;font-size:13.5px;font-weight:normal;color:#222;">20</div>
<div class="t" style="left:-279.5px;width:600px;text-align:center;top:635.47px;font-size:13.5px;font-weight:normal;color:#217346;">21</div>
<div class="t" style="left:-279.5px;width:600px;text-align:center;top:654.47px;font-size:13.5px;font-weight:normal;color:#222;">22</div>
<div class="t" style="left:-279.5px;width:600px;text-align:center;top:675.47px;font-size:13.5px;font-weight:normal;color:#222;">23</div>
<div class="t" style="left:-279.5px;width:600px;text-align:center;top:695.47px;font-size:13.5px;font-weight:normal;color:#222;">24</div>
<div class="t" style="left:-279.5px;width:600px;text-align:center;top:715.47px;font-size:13.5px;font-weight:normal;color:#222;">25</div>
<div class="t" style="left:-279.5px;width:600px;text-align:center;top:735.47px;font-size:13.5px;font-weight:normal;color:#222;">26</div>
<div class="t" style="left:-279.5px;width:600px;text-align:center;top:754.47px;font-size:13.5px;font-weight:normal;color:#222;">27</div>
<div class="t" style="left:-279.5px;width:600px;text-align:center;top:774.47px;font-size:13.5px;font-weight:normal;color:#222;">28</div>
<div class="a" style="left:8px;top:793px;width:25px;height:7px;overflow:hidden"><div class="t" style="left:0;width:25px;text-align:center;top:-1px;font-size:13.5px;color:#222">29</div></div>
<div class="t" style="right:943px;top:221.01px;font-size:16px;font-weight:normal;color:#000;letter-spacing:-0.28px">6/3/2020</div>
<div class="t" style="left:244.0px;top:243.48px;font-size:18.67px;font-weight:bold;color:#000;letter-spacing:0.27px">EXECUTIVE SUMMARY</div>
<div class="t" style="right:1287px;top:264.81px;font-size:16px;font-weight:bold;color:#000;letter-spacing:-0.1px">Project Name:</div>
<div class="t" style="right:1287px;top:285.51px;font-size:16px;font-weight:bold;color:#000;letter-spacing:-0.1px">Project Number:</div>
<div class="t" style="right:1287px;top:306.41px;font-size:16px;font-weight:bold;color:#000;letter-spacing:-0.1px">GMP or Base Contract Amount:</div>
<div class="t" style="right:1287px;top:327.11px;font-size:16px;font-weight:bold;color:#000;letter-spacing:-0.1px">Approved Owner Change Orders:</div>
<div class="t" style="right:1287px;top:347.91px;font-size:16px;font-weight:bold;color:#000;letter-spacing:-0.1px">Pending Owner Change Orders:</div>
<div class="t" style="right:1287px;top:368.81px;font-size:16px;font-weight:bold;color:#000;letter-spacing:-0.1px">Current Contract Amount:</div>
<div class="t" style="right:1287px;top:410.01px;font-size:16px;font-weight:bold;color:#000;letter-spacing:-0.1px">Accepted Sub Change Orders:</div>
<div class="t" style="right:1287px;top:430.81px;font-size:16px;font-weight:bold;color:#000;letter-spacing:-0.1px">Pending Sub Change Orders:</div>
<div class="t" style="right:1287px;top:472.21px;font-size:16px;font-weight:bold;color:#000;letter-spacing:-0.1px">Original Estimated Profit:</div>
<div class="t" style="right:1287px;top:492.91px;font-size:16px;font-weight:bold;color:#000;letter-spacing:-0.1px">Total Projected Cost to Complete:</div>
<div class="t" style="right:1287px;top:513.41px;font-size:16px;font-weight:bold;color:#000;letter-spacing:-0.1px">Current Projected Profit:</div>
<div class="t" style="right:1095px;top:264.81px;font-size:16px;font-weight:normal;color:#000;letter-spacing:-0.28px">&lt;project desc.&gt;</div>
<div class="t" style="right:1095px;top:285.51px;font-size:16px;font-weight:normal;color:#000;letter-spacing:-0.28px">&lt;unique project ID#&gt;</div>
<div class="t" style="left:314.3px;top:306.41px;font-size:16px;font-weight:normal;color:#000;letter-spacing:-0.28px">$</div>
<div class="t" style="right:1100.7px;top:306.41px;font-size:16px;font-weight:normal;color:#000;letter-spacing:-0.28px">1,279,850.00</div>
<div class="t" style="left:314.3px;top:327.11px;font-size:16px;font-weight:normal;color:#000;letter-spacing:-0.28px">$</div>
<div class="t" style="right:1100.7px;top:327.11px;font-size:16px;font-weight:normal;color:#000;letter-spacing:-0.28px">33,000.00</div>
<div class="t" style="left:314.3px;top:347.91px;font-size:16px;font-weight:normal;color:#000;letter-spacing:-0.28px">$</div>
<div class="t" style="left:314.3px;top:368.81px;font-size:16px;font-weight:normal;color:#000;letter-spacing:-0.28px">$</div>
<div class="t" style="right:1100.7px;top:368.81px;font-size:16px;font-weight:normal;color:#000;letter-spacing:-0.28px">1,312,850.00</div>
<div class="t" style="left:314.3px;top:410.01px;font-size:16px;font-weight:normal;color:#000;letter-spacing:-0.28px">$</div>
<div class="t" style="right:1100.7px;top:410.01px;font-size:16px;font-weight:normal;color:#000;letter-spacing:-0.28px">55,000.00</div>
<div class="t" style="left:314.3px;top:430.81px;font-size:16px;font-weight:normal;color:#000;letter-spacing:-0.28px">$</div>
<div class="t" style="left:314.3px;top:472.21px;font-size:16px;font-weight:normal;color:#000;letter-spacing:-0.28px">$</div>
<div class="t" style="right:1100.7px;top:472.21px;font-size:16px;font-weight:normal;color:#000;letter-spacing:-0.28px">116,350.00</div>
<div class="t" style="left:314.3px;top:492.91px;font-size:16px;font-weight:normal;color:#000;letter-spacing:-0.28px">$</div>
<div class="t" style="right:1100.7px;top:492.91px;font-size:16px;font-weight:normal;color:#000;letter-spacing:-0.28px">1,191,500.00</div>
<div class="t" style="left:314.3px;top:513.41px;font-size:16px;font-weight:normal;color:#000;letter-spacing:-0.28px">$</div>
<div class="t" style="right:1100.7px;top:513.41px;font-size:16px;font-weight:normal;color:#000;letter-spacing:-0.28px">121,350.00</div>
<div class="t" style="right:1117.5px;top:347.91px;font-size:16px;font-weight:normal;color:#000;letter-spacing:-0.28px">-</div>
<div class="t" style="right:1094.7px;top:430.81px;font-size:16px;font-weight:normal;color:#000;letter-spacing:-0.28px">(4,000.00)</div>
<div class="t" style="left:273px;width:600px;text-align:center;top:472.21px;font-size:16px;font-weight:normal;color:#000;letter-spacing:-0.28px">10.00%</div>
<div class="t" style="left:273px;width:600px;text-align:center;top:513.41px;font-size:16px;font-weight:normal;color:#000;letter-spacing:-0.28px">11.34%</div>
<svg style="left:0;top:0" width="1588" height="857"><polygon points="490,265 496,265 496,271" fill="#e00000"/><polygon points="490,285 496,285 496,291" fill="#e00000"/><polygon points="490,306 496,306 496,312" fill="#e00000"/><polygon points="490,327 496,327 496,333" fill="#e00000"/><polygon points="490,348 496,348 496,354" fill="#e00000"/><polygon points="490,369 496,369 496,375" fill="#e00000"/><polygon points="490,410 496,410 496,416" fill="#e00000"/><polygon points="490,431 496,431 496,437" fill="#e00000"/><polygon points="490,472 496,472 496,478" fill="#e00000"/><polygon points="490,493 496,493 496,499" fill="#e00000"/><polygon points="490,513 496,513 496,519" fill="#e00000"/><polygon points="643,472 649,472 649,478" fill="#e00000"/><polygon points="643,513 649,513 649,519" fill="#e00000"/></svg>
<div class="t" style="left:38px;top:554.31px;font-size:16px;font-weight:bold;color:#000;letter-spacing:-0.1px">Staff:</div>
<div class="t" style="left:310.5px;top:554.31px;font-size:16px;font-weight:bold;color:#000;letter-spacing:-0.1px">Schedule Status:</div>
<div class="t" style="left:37.4px;top:575.11px;font-size:16px;font-weight:normal;color:#000;letter-spacing:-0.28px">&lt;enter name and title&gt;</div>
<div class="t" style="left:37.4px;top:594.51px;font-size:16px;font-weight:normal;color:#000;letter-spacing:-0.28px">&lt;enter name and title&gt;</div>
<div class="t" style="left:37.4px;top:614.51px;font-size:16px;font-weight:normal;color:#000;letter-spacing:-0.28px">&lt;enter name and title&gt;</div>
<div class="t" style="left:37.4px;top:634.41px;font-size:16px;font-weight:normal;color:#000;letter-spacing:-0.28px">&lt;enter name and title&gt;</div>
<div class="t" style="right:1094.5px;top:575.11px;font-size:16px;font-weight:normal;color:#000;letter-spacing:-0.28px">Original Completion Date:</div>
<div class="t" style="right:1094.5px;top:594.51px;font-size:16px;font-weight:normal;color:#000;letter-spacing:-0.28px">Current Completion Date:</div>
<div class="t" style="left:500.5px;top:575.11px;font-size:16px;font-weight:normal;color:#000;letter-spacing:-0.28px">&lt;enter date&gt;</div>
<div class="t" style="left:500.5px;top:594.51px;font-size:16px;font-weight:normal;color:#000;letter-spacing:-0.28px">&lt;enter date&gt;</div>
<div class="t" style="left:37px;top:673.91px;font-size:16px;font-weight:bold;color:#000;letter-spacing:-0.1px">Issues and Action Items:</div>
<div class="t" style="left:37px;top:694.01px;font-size:16px;font-weight:normal;color:#000;letter-spacing:-0.28px">&lt;describe issue or action item #1&gt;</div>
<div class="t" style="left:37px;top:713.61px;font-size:16px;font-weight:normal;color:#000;letter-spacing:-0.28px">&lt;describe issue or action item #2&gt;</div>
<div class="t" style="left:37px;top:733.51px;font-size:16px;font-weight:normal;color:#000;letter-spacing:-0.28px">&lt;describe issue or action item #3&gt;</div>
<div class="t" style="left:37px;top:753.21px;font-size:16px;font-weight:normal;color:#000;letter-spacing:-0.28px">&lt;describe issue or action item #4&gt;</div>
<div class="a" style="left:304px;top:632px;width:194px;height:22px;border:2px solid #217346"></div>
<div class="a" style="left:494px;top:650px;width:6px;height:6px;background:#217346;border:1px solid #fff"></div>
<svg style="left:0;top:0" width="1588" height="857"><line x1="511" y1="317" x2="500" y2="325" stroke="#000" stroke-width="1"/><polygon points="496.5,327.5 503,320.5 505,326" fill="#000"/></svg>
<div class="a" style="left:510px;top:316px;width:144px;height:79px;background:#ffffe1;border:1px solid #000"></div>
<div class="t" style="left:513.9px;top:314.52px;font-size:12.2px;font-weight:bold;color:#000;letter-spacing:0.13px">This cell filled by the</div>
<div class="t" style="left:513.9px;top:329.12px;font-size:12.2px;font-weight:bold;color:#000;letter-spacing:0.13px">total of approved</div>
<div class="t" style="left:513.9px;top:343.82px;font-size:12.2px;font-weight:bold;color:#000;letter-spacing:0.13px">change orders on the</div>
<div class="t" style="left:513.9px;top:358.72px;font-size:12.2px;font-weight:bold;color:#000;letter-spacing:0.13px">"Prime Contract</div>
<div class="t" style="left:513.9px;top:373.42px;font-size:12.2px;font-weight:bold;color:#000;letter-spacing:0.13px">Change Orders" sheet</div>
<div class="a" style="left:8px;top:800px;width:1580px;height:27px;background:#e6e6e6;border-top:1px solid #c8c8c8"></div>
<div class="a" style="left:8px;top:827px;width:1580px;height:22px;background:#f3f3f3;border-top:1px solid #d0d0d0"></div>
<div class="a" style="left:0;top:849px;width:1588px;height:8px;background:#1c1c1c"></div>
<div class="a" style="left:1567px;top:204px;width:21px;height:596px;background:#e6e6e6"></div>
<div class="a" style="left:1570px;top:206px;width:15px;height:15px;background:#fff;border:1px solid #c6c6c6"></div>
<svg style="left:1573px;top:211px" width="9" height="5"><polygon points="0,5 9,5 4.5,0" fill="#666"/></svg>
<div class="a" style="left:1570px;top:221px;width:15px;height:509px;background:#fff;border:1px solid #b4b4b4"></div>
<div class="a" style="left:1570px;top:786px;width:15px;height:15px;background:#fff;border:1px solid #c6c6c6"></div>
<svg style="left:1573px;top:792px" width="9" height="5"><polygon points="0,0 9,0 4.5,5" fill="#666"/></svg>
<svg style="left:33px;top:808px" width="6" height="9"><polygon points="5,0 5,9 0,4.5" fill="#c8c8c8"/></svg>
<svg style="left:62px;top:808px" width="6" height="9"><polygon points="0,0 0,9 5,4.5" fill="#217346"/></svg>
<div class="a" style="left:107px;top:804px;width:1px;height:20px;background:#bdbdbd"></div>
<div class="a" style="left:236px;top:800px;width:112px;height:25px;background:#fff;border-left:1px solid #c8c8c8;border-right:1px solid #c8c8c8"></div>
<div class="a" style="left:236px;top:822px;width:112px;height:2px;background:#217346"></div>
<div class="t" style="left:122.4px;top:802.88px;font-size:12.6px;font-weight:normal;color:#444;">Instructions, TOC</div>
<div class="t" style="left:363.2px;top:802.88px;font-size:12.6px;font-weight:normal;color:#444;">Prime Contract Change Orders</div>
<div class="t" style="left:570px;top:802.88px;font-size:12.6px;font-weight:normal;color:#444;">Change Order Requests</div>
<div class="t" style="left:737.2px;top:802.88px;font-size:12.6px;font-weight:normal;color:#444;">Contingency</div>
<div class="t" style="left:836.4px;top:802.88px;font-size:12.6px;font-weight:normal;color:#444;">Subcontract Status</div>
<div class="t" style="left:972.7px;top:802.88px;font-size:12.6px;font-weight:normal;color:#444;">Invoice Log</div>
<div class="t" style="left:1066.9px;top:802.88px;font-size:12.6px;font-weight:normal;color:#444;">Allowances</div>
<div class="t" style="left:1158.3px;top:802.88px;font-size:12.6px;font-weight:normal;color:#444;">Buyout</div>
<div class="t" style="left:1225.8px;top:802.88px;font-size:12.6px;font-weight:normal;color:#444;">Budget</div>
<div class="t" style="left:248.2px;top:803.04px;font-size:12.15px;font-weight:bold;color:#217346;">Exec Summary</div>
<div class="a" style="left:556px;top:804px;width:1px;height:20px;background:#bdbdbd"></div>
<div class="a" style="left:722px;top:804px;width:1px;height:20px;background:#bdbdbd"></div>
<div class="a" style="left:959px;top:804px;width:1px;height:20px;background:#bdbdbd"></div>
<div class="a" style="left:1053px;top:804px;width:1px;height:20px;background:#bdbdbd"></div>
<div class="a" style="left:1145px;top:804px;width:1px;height:20px;background:#bdbdbd"></div>
<div class="a" style="left:1212px;top:804px;width:1px;height:20px;background:#bdbdbd"></div>
<div class="t" style="left:1274.5px;top:803.12px;font-size:12.5px;font-weight:bold;color:#217346;">...</div>
<svg style="left:1298px;top:805px" width="17" height="17"><circle cx="8.5" cy="8.5" r="7.5" fill="none" stroke="#666" stroke-width="1.1"/><path d="M8.5 4.5v8M4.5 8.5h8" stroke="#666" stroke-width="1.2"/></svg>
<div class="a" style="left:1334px;top:808px;width:1.5px;height:2px;background:#a0a0a0"></div>
<div class="a" style="left:1334px;top:812px;width:1.5px;height:2px;background:#a0a0a0"></div>
<div class="a" style="left:1334px;top:816px;width:1.5px;height:2px;background:#a0a0a0"></div>
<div class="a" style="left:1351px;top:806px;width:15px;height:16px;background:#fff;border:1px solid #c6c6c6"></div>
<svg style="left:1356px;top:810px" width="5" height="8"><polygon points="5,0 5,8 0,4" fill="#555"/></svg>
<div class="a" style="left:1366px;top:806px;width:176px;height:16px;background:#fff;border:1px solid #b4b4b4"></div>
<div class="a" style="left:1552px;top:806px;width:15px;height:16px;background:#fff;border:1px solid #c6c6c6"></div>
<svg style="left:1557px;top:810px" width="5" height="8"><polygon points="0,0 0,8 5,4" fill="#555"/></svg>
<div class="t" style="left:15.4px;top:828.40px;font-size:11.1px;font-weight:normal;color:#444;">Cell C6 note by</div>
<svg style="left:1174px;top:830px" width="16" height="15" viewBox="0 0 16 15"><rect x="0.5" y="0.5" width="13" height="9" fill="none" stroke="#555"/><path d="M3 13h5" stroke="#555"/><circle cx="11.5" cy="10.5" r="2.8" fill="#f3f3f3" stroke="#555" stroke-width="1.2" stroke-dasharray="1.2 0.8"/></svg>
<div class="t" style="left:1192px;top:828.53px;font-size:11.3px;font-weight:normal;color:#444;">Display Settings</div>
<div class="a" style="left:1292px;top:828px;width:39px;height:21px;background:#d6d6d6"></div>
<svg style="left:1304px;top:831px" width="14" height="14"><path d="M0.5 0.5h13v13h-13zM4.8 0.5v13M9.2 0.5v13M0.5 4.8h13M0.5 9.2h13" fill="none" stroke="#444" stroke-width="1"/></svg>
<svg style="left:1344px;top:831px" width="14" height="14"><rect x="0.5" y="0.5" width="13" height="13" fill="none" stroke="#555"/><rect x="3.5" y="3" width="7" height="8" fill="none" stroke="#555"/><path d="M5 5.5h4M5 7.5h4" stroke="#555"/></svg>
<svg style="left:1383px;top:831px" width="15" height="14"><path d="M0.5 13.5V0.5h14v13M5.5 0.5v7h4v-7" fill="none" stroke="#555"/></svg>
<div class="a" style="left:1416px;top:837px;width:8px;height:1px;background:#555"></div>
<div class="a" style="left:1428px;top:837px;width:100px;height:1px;background:#aaa"></div>
<div class="a" style="left:1477px;top:832px;width:4px;height:11px;background:#666"></div>
<div class="a" style="left:1532px;top:837px;width:8px;height:1px;background:#555"></div>
<div class="a" style="left:1535.5px;top:833.5px;width:1px;height:8px;background:#555"></div>
<div class="t" style="left:1554px;top:828.64px;font-size:11px;font-weight:normal;color:#444;">100%</div>
<div class="a" style="left:55px;top:849px;width:340px;height:8px;background:#2e2e2e"></div>
<div class="a" style="left:590px;top:849px;width:48px;height:8px;background:#4b4b4b"></div>
<div class="t" style="left:1482px;top:851px;font-size:11px;color:#ddd;line-height:12px">3:33 PM</div>
</body></html>
